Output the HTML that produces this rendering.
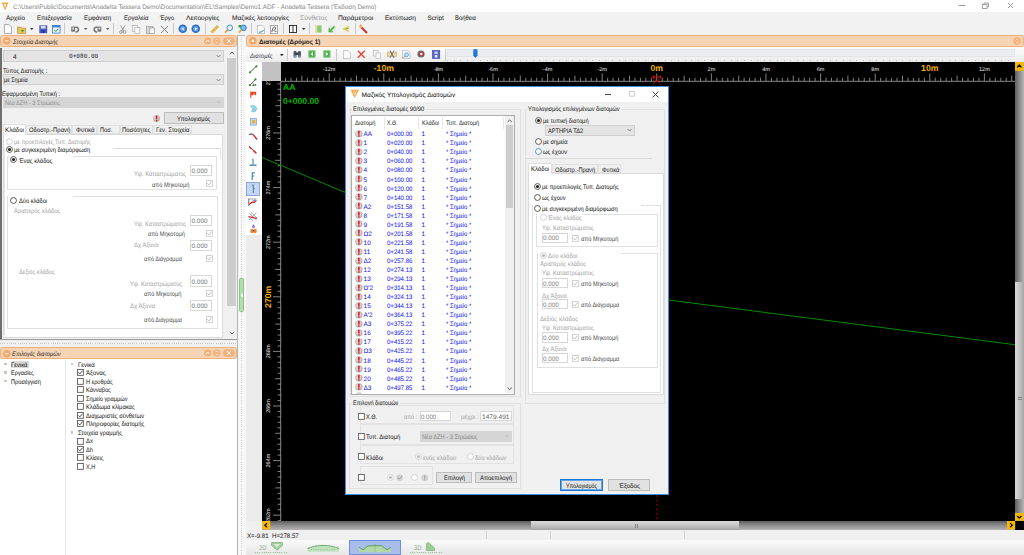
<!DOCTYPE html>
<html><head><meta charset="utf-8"><style>
html,body{margin:0;padding:0;}
body{width:1024px;height:555px;overflow:hidden;position:relative;background:#f0f0f0;font-family:"Liberation Sans",sans-serif;text-rendering:geometricPrecision;}
body>div,body>svg{position:absolute;box-sizing:border-box;}
body>svg{overflow:visible;}
.t{-webkit-text-stroke:0.04px currentColor;}
</style></head><body>
<div style="left:0.00px;top:0.00px;width:1024.00px;height:12.00px;background:#ffffff;"></div>
<svg style="left:1.00px;top:2.00px;" width="8" height="9" viewBox="0 0 8 9"><path d="M0.5 0.5 L7.5 0.5 L4 8.5 Z" fill="#f7a94f"/><path d="M2.5 2 L5.5 2 L4 5.5 Z" fill="#fff3e0"/></svg>
<div class="t" style="left:12.70px;top:5px;font-size:6.40px;line-height:6.40px;color:#8c8c8c;white-space:pre;font-family:'Liberation Sans',sans-serif;transform:scaleX(0.987);transform-origin:0 0;">C:\Users\Public\Documents\Anadelta Tessera Demo\Documentation\EL\Samples\Demo1.ADF - Anadelta Tessera (Έκδοση Demo)</div>
<div style="left:959.00px;top:5.00px;width:6.00px;height:1.00px;background:#9a9a9a;"></div>
<svg style="left:982.00px;top:2.00px;" width="8" height="7" viewBox="0 0 8 7"><rect x="0.5" y="2.5" width="4.5" height="4" fill="none" stroke="#9a9a9a" stroke-width="0.9"/><path d="M2 2.5 V1 H6.5 V5 H5" fill="none" stroke="#9a9a9a" stroke-width="0.9"/></svg>
<svg style="left:1007.00px;top:2.00px;" width="7" height="7" viewBox="0 0 7 7"><path d="M1 1 L6 6 M6 1 L1 6" stroke="#8a8a8a" stroke-width="0.9"/></svg>
<div style="left:0.00px;top:12.00px;width:1024.00px;height:23.00px;background:#f2f2f2;"></div>
<div class="t" style="left:5.90px;top:16px;font-size:6.40px;line-height:6.40px;color:#1c1c22;white-space:pre;font-family:'Liberation Sans',sans-serif;">Αρχείο</div>
<div class="t" style="left:36.80px;top:16px;font-size:6.40px;line-height:6.40px;color:#1c1c22;white-space:pre;font-family:'Liberation Sans',sans-serif;transform:scaleX(0.941);transform-origin:0 0;">Επεξεργασία</div>
<div class="t" style="left:83.70px;top:16px;font-size:6.40px;line-height:6.40px;color:#1c1c22;white-space:pre;font-family:'Liberation Sans',sans-serif;transform:scaleX(0.974);transform-origin:0 0;">Εμφάνιση</div>
<div class="t" style="left:123.50px;top:16px;font-size:6.40px;line-height:6.40px;color:#1c1c22;white-space:pre;font-family:'Liberation Sans',sans-serif;transform:scaleX(0.943);transform-origin:0 0;">Εργαλεία</div>
<div class="t" style="left:160.00px;top:16px;font-size:6.40px;line-height:6.40px;color:#1c1c22;white-space:pre;font-family:'Liberation Sans',sans-serif;transform:scaleX(0.908);transform-origin:0 0;">Έργο</div>
<div class="t" style="left:186.30px;top:16px;font-size:6.40px;line-height:6.40px;color:#1c1c22;white-space:pre;font-family:'Liberation Sans',sans-serif;transform:scaleX(1.039);transform-origin:0 0;">Λειτουργίες</div>
<div class="t" style="left:231.70px;top:16px;font-size:6.40px;line-height:6.40px;color:#1c1c22;white-space:pre;font-family:'Liberation Sans',sans-serif;transform:scaleX(1.037);transform-origin:0 0;">Μαζικές λειτουργίες</div>
<div class="t" style="left:299.70px;top:16px;font-size:6.40px;line-height:6.40px;color:#a0a0a0;white-space:pre;font-family:'Liberation Sans',sans-serif;transform:scaleX(1.056);transform-origin:0 0;">Σύνθετος</div>
<div class="t" style="left:338.30px;top:16px;font-size:6.40px;line-height:6.40px;color:#1c1c22;white-space:pre;font-family:'Liberation Sans',sans-serif;transform:scaleX(1.055);transform-origin:0 0;">Παράμετροι</div>
<div class="t" style="left:384.80px;top:16px;font-size:6.40px;line-height:6.40px;color:#1c1c22;white-space:pre;font-family:'Liberation Sans',sans-serif;transform:scaleX(1.019);transform-origin:0 0;">Εκτύπωση</div>
<div class="t" style="left:427.40px;top:16px;font-size:6.40px;line-height:6.40px;color:#1c1c22;white-space:pre;font-family:'Liberation Sans',sans-serif;">Script</div>
<div class="t" style="left:455.00px;top:16px;font-size:6.40px;line-height:6.40px;color:#1c1c22;white-space:pre;font-family:'Liberation Sans',sans-serif;transform:scaleX(0.916);transform-origin:0 0;">Βοήθεια</div>
<svg style="left:4.00px;top:24.00px;" width="8" height="10" viewBox="0 0 8 10"><path d="M0.5 0.5 H5 L7.5 3 V9.5 H0.5 Z" fill="#fff" stroke="#9a9a9a" stroke-width="0.8"/></svg>
<svg style="left:16.50px;top:24.50px;" width="9" height="9" viewBox="0 0 9 9"><path d="M0.5 2 H3.5 L4.5 3 H8.5 V8.5 H0.5 Z" fill="#e6c35a" stroke="#b08a2a" stroke-width="0.6"/><path d="M4 5 L7 5 L5.5 7.5 Z" fill="#3a9a3a"/></svg>
<svg style="left:30.00px;top:28.00px;" width="3.5" height="2.5" viewBox="0 0 3.5 2.5"><path d="M0 0 H3.5 L1.75 2 Z" fill="#333"/></svg>
<svg style="left:38.70px;top:24.50px;" width="8.5" height="8.5" viewBox="0 0 8.5 8.5"><rect x="0.3" y="0.3" width="7.9" height="7.9" fill="#4a5ac8"/><rect x="1.8" y="0.8" width="4.8" height="2.8" fill="#d9dcf2"/><rect x="2.3" y="5" width="3.8" height="3" fill="#2a3aa0"/></svg>
<svg style="left:52.00px;top:24.50px;" width="8.5" height="8.5" viewBox="0 0 8.5 8.5"><rect x="0.4" y="0.4" width="7.7" height="7.7" fill="#e8f0fb" stroke="#3d7fd0" stroke-width="0.8"/><rect x="0.4" y="0.4" width="7.7" height="2" fill="#3d7fd0"/><path d="M2.3 5 L3.8 6.5 L6.3 3.8" stroke="#2a9a2a" stroke-width="1" fill="none"/></svg>
<div style="left:64.40px;top:23.00px;width:0.80px;height:11.00px;background:#c8c8c8;"></div>
<svg style="left:70.80px;top:25.50px;" width="8.6" height="6.5" viewBox="0 0 8.6 6.5"><rect x="0.3" y="0.6" width="3.8" height="5" fill="#6e6e6e"/><rect x="1.2" y="1.5" width="2" height="2" fill="#dcdcdc"/><path d="M4 1.4 A2.4 2.4 0 1 1 4.6 5.9" stroke="#6e6e6e" stroke-width="1.5" fill="none"/></svg>
<svg style="left:84.00px;top:28.00px;" width="3.5" height="2.5" viewBox="0 0 3.5 2.5"><path d="M0 0 H3.5 L1.75 2 Z" fill="#555"/></svg>
<svg style="left:93.00px;top:25.50px;" width="8.6" height="6.5" viewBox="0 0 8.6 6.5"><rect x="4.5" y="0.6" width="3.8" height="5" fill="#6e6e6e"/><rect x="5.4" y="1.5" width="2" height="2" fill="#dcdcdc"/><path d="M4.6 1.4 A2.4 2.4 0 1 0 4 5.9" stroke="#6e6e6e" stroke-width="1.5" fill="none"/></svg>
<svg style="left:105.50px;top:28.00px;" width="3.5" height="2.5" viewBox="0 0 3.5 2.5"><path d="M0 0 H3.5 L1.75 2 Z" fill="#555"/></svg>
<div style="left:112.50px;top:23.00px;width:0.80px;height:11.00px;background:#c8c8c8;"></div>
<svg style="left:119.00px;top:24.50px;" width="7.5" height="9" viewBox="0 0 7.5 9"><path d="M1.5 0.5 L5 6 M6 0.5 L2.5 6" stroke="#8a8a8a" stroke-width="0.9"/><circle cx="2" cy="7" r="1.4" fill="none" stroke="#8a8a8a" stroke-width="0.8"/><circle cx="5.5" cy="7" r="1.4" fill="none" stroke="#8a8a8a" stroke-width="0.8"/></svg>
<svg style="left:132.40px;top:24.50px;" width="8.5" height="9" viewBox="0 0 8.5 9"><rect x="0.5" y="0.5" width="5" height="6" fill="#fafafa" stroke="#b0b0b0" stroke-width="0.7"/><rect x="2.8" y="2.5" width="5" height="6" fill="#fafafa" stroke="#b0b0b0" stroke-width="0.7"/></svg>
<svg style="left:145.80px;top:24.50px;" width="9" height="9" viewBox="0 0 9 9"><rect x="0.5" y="1.5" width="6.5" height="7" fill="#d8d8d8" stroke="#9a9a9a" stroke-width="0.7"/><rect x="3.5" y="3" width="5" height="5.5" fill="#f6f6f6" stroke="#9a9a9a" stroke-width="0.7"/></svg>
<svg style="left:159.80px;top:24.50px;" width="9" height="9" viewBox="0 0 9 9"><path d="M1 1 L8 8 M8 1 L1 8" stroke="#7a7a7a" stroke-width="1"/></svg>
<div style="left:173.00px;top:23.00px;width:0.80px;height:11.00px;background:#c8c8c8;"></div>
<svg style="left:178.00px;top:24.30px;" width="9.5" height="9.5" viewBox="0 0 9.5 9.5"><circle cx="4.75" cy="4.75" r="4.3" fill="#2f6fc4"/><circle cx="4.75" cy="4.75" r="2.6" fill="#6aa8ea"/><path d="M3.3 4.75 L5.5 3.2 V6.3 Z" fill="#fff"/></svg>
<svg style="left:191.00px;top:24.30px;" width="9.5" height="9.5" viewBox="0 0 9.5 9.5"><circle cx="4.75" cy="4.75" r="4.3" fill="#2f6fc4"/><circle cx="4.75" cy="4.75" r="2.6" fill="#6aa8ea"/><path d="M6.2 4.75 L4 3.2 V6.3 Z" fill="#fff"/></svg>
<div style="left:205.00px;top:23.00px;width:0.80px;height:11.00px;background:#c8c8c8;"></div>
<svg style="left:209.70px;top:24.30px;" width="9.5" height="9.5" viewBox="0 0 9.5 9.5"><path d="M1 7.5 L7 1.5 L8.5 3 L2.5 9 Z" fill="#f0c040" stroke="#c09020" stroke-width="0.6"/></svg>
<svg style="left:223.80px;top:24.30px;" width="9.5" height="9.5" viewBox="0 0 9.5 9.5"><circle cx="5.8" cy="3.8" r="2.8" fill="#dff0ff" stroke="#3a80c8" stroke-width="0.9"/><path d="M1 8.5 L3.8 5.7" stroke="#e09030" stroke-width="1.6"/></svg>
<svg style="left:237.60px;top:24.30px;" width="9" height="9.5" viewBox="0 0 9 9.5"><circle cx="5.5" cy="3.8" r="2.8" fill="#7ac0f0" stroke="#2a70b8" stroke-width="0.9"/><path d="M1 8.5 L3.5 5.8" stroke="#e0a020" stroke-width="1.6"/><rect x="0.5" y="1" width="2.5" height="2.5" fill="#3aa03a"/></svg>
<div style="left:250.50px;top:23.00px;width:0.80px;height:11.00px;background:#c8c8c8;"></div>
<svg style="left:257.00px;top:24.50px;" width="8" height="9" viewBox="0 0 8 9"><path d="M0.5 0.5 H5 L7.5 3 V8.5 H0.5 Z" fill="#fff" stroke="#a8a8a8" stroke-width="0.7"/><path d="M2 7 C3.5 7.5 5.5 6.5 6.5 5" stroke="#4a90d8" stroke-width="1.3" fill="none"/></svg>
<svg style="left:269.70px;top:24.50px;" width="8" height="9" viewBox="0 0 8 9"><rect x="0.5" y="0.5" width="7" height="8" fill="#fafafa" stroke="#8a8a8a" stroke-width="0.7"/><path d="M1.8 7.2 C2.5 4 3 2 4.5 2 C6 2 6 4 4.5 5 C3.5 5.5 5 6.5 6.5 6.5" stroke="#333" stroke-width="0.8" fill="none"/></svg>
<div style="left:282.80px;top:23.00px;width:0.80px;height:11.00px;background:#c8c8c8;"></div>
<svg style="left:288.70px;top:25.00px;" width="8" height="8" viewBox="0 0 8 8"><rect x="0.5" y="0.5" width="7" height="7" fill="#fff" stroke="#222" stroke-width="0.9"/><path d="M4 0.5 V7.5" stroke="#222" stroke-width="0.9"/></svg>
<svg style="left:301.50px;top:28.00px;" width="3.5" height="2.5" viewBox="0 0 3.5 2.5"><path d="M0 0 H3.5 L1.75 2 Z" fill="#333"/></svg>
<div style="left:308.60px;top:23.00px;width:0.80px;height:11.00px;background:#c8c8c8;"></div>
<svg style="left:315.00px;top:25.00px;" width="7" height="8" viewBox="0 0 7 8"><rect x="0" y="0" width="7" height="8" fill="#e6eedc"/><rect x="2.2" y="0.5" width="4.3" height="7" fill="#86cc78"/><rect x="0.5" y="0.5" width="1.5" height="7" fill="#f2d27a"/></svg>
<svg style="left:328.30px;top:25.00px;" width="8" height="8" viewBox="0 0 8 8"><rect x="0.3" y="0.3" width="7.4" height="7.4" fill="#e4eedc"/><path d="M6.5 1.5 L2 6" stroke="#3aa83a" stroke-width="1.6" fill="none"/><path d="M1.2 3 V6.8 H5" stroke="#3aa83a" stroke-width="1.1" fill="none"/></svg>
<svg style="left:341.90px;top:25.00px;" width="8" height="8" viewBox="0 0 8 8"><rect x="0.3" y="0.3" width="7.4" height="7.4" fill="#f4f0dc"/><path d="M6.8 1.5 L1.8 4 L6.8 6.5" stroke="#e8c040" stroke-width="1.1" fill="none"/><path d="M6.8 3 L3.5 4.2" stroke="#4aaa3a" stroke-width="0.9"/></svg>
<div style="left:355.20px;top:23.00px;width:0.80px;height:11.00px;background:#c8c8c8;"></div>
<svg style="left:359.40px;top:24.30px;" width="9" height="9.5" viewBox="0 0 9 9.5"><path d="M1 2 L8 9" stroke="#d03030" stroke-width="2"/><path d="M1 0.5 L3 2.5" stroke="#f0b030" stroke-width="1.2"/><circle cx="2" cy="3" r="1" fill="#f6d050"/></svg>
<div style="left:0px;top:34.7px;width:237px;height:12.799999999999997px;background:#f4d4b5;border:1px solid #f3b078;border-radius:3px;"></div>
<svg style="left:2.80px;top:37.30px;" width="7.6" height="7.6" viewBox="0 0 7.6 7.6"><circle cx="3.8" cy="3.8" r="3.5" fill="#f2aa6a" stroke="#e8985a" stroke-width="0.5"/><rect x="2" y="3.4" width="3.6" height="0.9" fill="#fff"/></svg>
<div class="t" style="left:12.90px;top:40px;font-size:6.40px;line-height:6.40px;color:#2a2a2a;white-space:pre;font-family:'Liberation Sans',sans-serif;font-style:italic;transform:scaleX(0.916);transform-origin:0 0;-webkit-text-stroke:0;">Στοιχεία Διατομής</div>
<svg style="left:203.50px;top:37.20px;" width="7.5" height="8" viewBox="0 0 7.5 8"><circle cx="3.75" cy="4" r="3.6" fill="#f2b07a"/><path d="M2 5 L3.75 3 L5.5 5" stroke="#fff" stroke-width="0.9" fill="none"/></svg>
<svg style="left:213.20px;top:37.20px;" width="7.5" height="8" viewBox="0 0 7.5 8"><circle cx="3.75" cy="4" r="3.6" fill="#f2b07a"/><path d="M2.6 3.2 L3.75 2 L4.9 3.2 M2.6 4.8 L3.75 6 L4.9 4.8" stroke="#fff" stroke-width="0.7" fill="none"/></svg>
<svg style="left:222.60px;top:37.20px;" width="11.8" height="8" viewBox="0 0 11.8 8"><rect x="0" y="0.2" width="11.8" height="7.6" rx="3.8" fill="#f2b07a"/><path d="M4 2 L7.8 6 M7.8 2 L4 6" stroke="#fff" stroke-width="1"/></svg>
<div style="left:0.00px;top:47.50px;width:237.00px;height:291.50px;background:#f0f0f0;"></div>
<div style="left:0.00px;top:47.50px;width:1.60px;height:291.50px;background:#6e6e6e;"></div>
<div style="left:236.60px;top:35.00px;width:1.00px;height:520.00px;background:#b4b4b4;"></div>
<div style="left:2.90px;top:49.90px;width:220.80px;height:11.80px;background:#e4e4e4;border:1px solid #cfcfcf;"></div>
<svg style="left:215.70px;top:53.80px;" width="5" height="4" viewBox="0 0 5 4"><path d="M0.6 1 L2.5 3 L4.4 1" stroke="#6a6a6a" stroke-width="0.8" fill="none"/></svg>
<div class="t" style="left:12.90px;top:55px;font-size:6.40px;line-height:6.40px;color:#1c1c22;white-space:pre;font-family:'Liberation Sans',sans-serif;">4</div>
<div class="t" style="left:68.60px;top:54px;font-size:6.40px;line-height:6.40px;color:#303040;white-space:pre;font-family:'Liberation Mono',monospace;transform:scaleX(0.954);transform-origin:0 0;">0+080.00</div>
<div class="t" style="left:2.60px;top:69px;font-size:6.40px;line-height:6.40px;color:#1c1c22;white-space:pre;font-family:'Liberation Sans',sans-serif;transform:scaleX(0.915);transform-origin:0 0;">Τύπος Διατομής :</div>
<div style="left:2.90px;top:74.30px;width:220.80px;height:10.80px;background:#e4e4e4;border:1px solid #cfcfcf;"></div>
<svg style="left:215.70px;top:77.70px;" width="5" height="4" viewBox="0 0 5 4"><path d="M0.6 1 L2.5 3 L4.4 1" stroke="#6a6a6a" stroke-width="0.8" fill="none"/></svg>
<div class="t" style="left:4.10px;top:78px;font-size:6.40px;line-height:6.40px;color:#1c1c22;white-space:pre;font-family:'Liberation Sans',sans-serif;transform:scaleX(0.862);transform-origin:0 0;">με Σημεία</div>
<div class="t" style="left:2.30px;top:92px;font-size:6.40px;line-height:6.40px;color:#1c1c22;white-space:pre;font-family:'Liberation Sans',sans-serif;transform:scaleX(0.895);transform-origin:0 0;">Εφαρμοσμένη Τυπική :</div>
<div style="left:2.90px;top:96.70px;width:220.80px;height:11.20px;background:#d5d5d5;border:1px solid #d5d5d5;"></div>
<svg style="left:215.70px;top:100.30px;" width="5" height="4" viewBox="0 0 5 4"><path d="M0.6 1 L2.5 3 L4.4 1" stroke="#b8b8b8" stroke-width="0.8" fill="none"/></svg>
<div class="t" style="left:4.70px;top:101px;font-size:6.40px;line-height:6.40px;color:#949494;white-space:pre;font-family:'Liberation Sans',sans-serif;transform:scaleX(0.881);transform-origin:0 0;">Νέα ΔΖΗ - 3 Στρώσεις</div>
<svg style="left:152.80px;top:114.80px;" width="7.2" height="7.2" viewBox="0 0 7.2 7.2"><circle cx="3.6" cy="3.6" r="3.45" fill="#b2b2b2"/><circle cx="3.30" cy="3.30" r="2.50" fill="#d4d4d4"/><rect x="2.80" y="0.70" width="1.6" height="3.7" fill="#e8181a"/><rect x="2.80" y="5.00" width="1.6" height="1.3" fill="#e8181a"/></svg>
<div style="left:164.00px;top:112.20px;width:59.70px;height:12.10px;background:#e1e1e1;border:1px solid #bdbdbd;"></div>
<div class="t" style="left:176.90px;top:117px;font-size:6.40px;line-height:6.40px;color:#1c1c22;white-space:pre;font-family:'Liberation Sans',sans-serif;transform:scaleX(0.888);transform-origin:0 0;">Υπολογισμός</div>
<div style="left:2.60px;top:134.20px;width:220.60px;height:203.40px;background:#ffffff;border:1px solid #dadada;"></div>
<div style="left:2.60px;top:124.10px;width:23.80px;height:11.10px;background:#ffffff;border:1px solid #e0e0e0;border-bottom:none;"></div>
<div class="t" style="left:5.00px;top:128px;font-size:6.40px;line-height:6.40px;color:#1c1c22;white-space:pre;font-family:'Liberation Sans',sans-serif;transform:scaleX(0.969);transform-origin:0 0;">Κλάδοι</div>
<div style="left:26.40px;top:124.90px;width:45.70px;height:9.30px;background:#f0f0f0;border:1px solid #e0e0e0;"></div>
<div class="t" style="left:29.00px;top:128px;font-size:6.40px;line-height:6.40px;color:#1c1c22;white-space:pre;font-family:'Liberation Sans',sans-serif;transform:scaleX(0.921);transform-origin:0 0;">Οδοστρ.-Πρανή</div>
<div style="left:72.10px;top:124.90px;width:24.60px;height:9.30px;background:#f0f0f0;border:1px solid #e0e0e0;"></div>
<div class="t" style="left:75.50px;top:128px;font-size:6.40px;line-height:6.40px;color:#1c1c22;white-space:pre;font-family:'Liberation Sans',sans-serif;transform:scaleX(0.965);transform-origin:0 0;">Φυτικά</div>
<div style="left:96.70px;top:124.90px;width:23.30px;height:9.30px;background:#f0f0f0;border:1px solid #e0e0e0;"></div>
<div class="t" style="left:99.60px;top:128px;font-size:6.40px;line-height:6.40px;color:#1c1c22;white-space:pre;font-family:'Liberation Sans',sans-serif;transform:scaleX(0.892);transform-origin:0 0;">Ποσ.</div>
<div style="left:120.00px;top:124.90px;width:32.60px;height:9.30px;background:#f0f0f0;border:1px solid #e0e0e0;"></div>
<div class="t" style="left:121.80px;top:128px;font-size:6.40px;line-height:6.40px;color:#1c1c22;white-space:pre;font-family:'Liberation Sans',sans-serif;transform:scaleX(0.942);transform-origin:0 0;">Ποσότητες</div>
<div style="left:152.60px;top:124.90px;width:39.10px;height:9.30px;background:#f0f0f0;border:1px solid #e0e0e0;"></div>
<div class="t" style="left:155.50px;top:128px;font-size:6.40px;line-height:6.40px;color:#1c1c22;white-space:pre;font-family:'Liberation Sans',sans-serif;transform:scaleX(0.943);transform-origin:0 0;">Γεν. Στοιχεία</div>
<svg style="left:5.60px;top:137.60px;" width="7" height="7" viewBox="0 0 7 7"><circle cx="3.5" cy="3.5" r="2.95" fill="#fff" stroke="#c6c6c6" stroke-width="0.8"/></svg>
<div class="t" style="left:14.00px;top:140px;font-size:6.40px;line-height:6.40px;color:#a8a8a8;white-space:pre;font-family:'Liberation Sans',sans-serif;transform:scaleX(0.891);transform-origin:0 0;">με προεπιλογές Τυπ. Διατομής</div>
<div style="left:113.00px;top:147.60px;width:108.40px;height:1.00px;background:#dcdcdc;"></div>
<div style="left:220.40px;top:147.60px;width:1.00px;height:12.40px;background:#e6e6e6;"></div>
<div style="left:4.20px;top:147.60px;width:1.00px;height:187.90px;background:#e6e6e6;"></div>
<svg style="left:5.60px;top:145.80px;" width="7" height="7" viewBox="0 0 7 7"><circle cx="3.5" cy="3.5" r="2.95" fill="#fff" stroke="#333333" stroke-width="0.8"/><circle cx="3.5" cy="3.5" r="1.6" fill="#222"/></svg>
<div class="t" style="left:14.00px;top:148px;font-size:6.40px;line-height:6.40px;color:#1c1c22;white-space:pre;font-family:'Liberation Sans',sans-serif;transform:scaleX(0.902);transform-origin:0 0;">με συγκεκριμένη διαμόρφωση</div>
<div style="left:7.30px;top:155.80px;width:1.00px;height:33.70px;background:#e0e0e0;"></div>
<div style="left:216.30px;top:155.80px;width:1.00px;height:33.70px;background:#e0e0e0;"></div>
<div style="left:7.30px;top:188.50px;width:210.00px;height:1.00px;background:#e0e0e0;"></div>
<div style="left:7.30px;top:155.80px;width:0.00px;height:1.00px;background:#e0e0e0;"></div>
<div style="left:73.00px;top:155.80px;width:144.30px;height:1.00px;background:#e0e0e0;"></div>
<svg style="left:10.25px;top:156.40px;" width="7" height="7" viewBox="0 0 7 7"><circle cx="3.5" cy="3.5" r="2.95" fill="#fff" stroke="#333333" stroke-width="0.8"/><circle cx="3.5" cy="3.5" r="1.6" fill="#222"/></svg>
<div class="t" style="left:18.80px;top:159px;font-size:6.40px;line-height:6.40px;color:#1c1c22;white-space:pre;font-family:'Liberation Sans',sans-serif;transform:scaleX(0.903);transform-origin:0 0;">Ένας κλάδος</div>
<div class="t" style="left:134.00px;top:172px;font-size:6.40px;line-height:6.40px;color:#a8a8a8;white-space:pre;font-family:'Liberation Sans',sans-serif;transform:scaleX(0.900);transform-origin:0 0;">Υψ. Καταστρώματος</div>
<div style="left:190.00px;top:165.20px;width:22.00px;height:11.10px;background:#ffffff;border:1px solid #d6d6d6;"></div>
<div class="t" style="left:191.50px;top:169px;font-size:6.40px;line-height:6.40px;color:#7a7a7a;white-space:pre;font-family:'Liberation Sans',sans-serif;">0.000</div>
<div class="t" style="left:151.70px;top:183px;font-size:6.40px;line-height:6.40px;color:#555555;white-space:pre;font-family:'Liberation Sans',sans-serif;transform:scaleX(0.889);transform-origin:0 0;">από Μηκοτομή</div>
<svg style="left:206.20px;top:180.00px;" width="8.3" height="8.3" viewBox="0 0 8.3 8.3"><rect x="0.45" y="0.45" width="5.90" height="5.90" fill="#fff" stroke="#cdcdcd" stroke-width="0.9"/><path d="M1.36 3.4 L2.856 4.896 L5.576 1.7" stroke="#b8b8b8" stroke-width="0.9" fill="none"/></svg>
<div style="left:7.30px;top:196.10px;width:1.00px;height:132.90px;background:#e0e0e0;"></div>
<div style="left:216.90px;top:196.10px;width:1.00px;height:132.90px;background:#e0e0e0;"></div>
<div style="left:7.30px;top:328.00px;width:210.60px;height:1.00px;background:#e0e0e0;"></div>
<div style="left:7.30px;top:196.10px;width:0.00px;height:1.00px;background:#e0e0e0;"></div>
<div style="left:73.00px;top:196.10px;width:144.90px;height:1.00px;background:#e0e0e0;"></div>
<svg style="left:10.00px;top:196.70px;" width="7" height="7" viewBox="0 0 7 7"><circle cx="3.5" cy="3.5" r="2.95" fill="#fff" stroke="#333333" stroke-width="0.8"/></svg>
<div class="t" style="left:18.80px;top:199px;font-size:6.40px;line-height:6.40px;color:#1c1c22;white-space:pre;font-family:'Liberation Sans',sans-serif;transform:scaleX(0.888);transform-origin:0 0;">Δύο κλάδοι</div>
<div class="t" style="left:14.00px;top:209px;font-size:6.40px;line-height:6.40px;color:#a8a8a8;white-space:pre;font-family:'Liberation Sans',sans-serif;transform:scaleX(0.911);transform-origin:0 0;">Αριστερός κλάδος</div>
<div class="t" style="left:134.00px;top:222px;font-size:6.40px;line-height:6.40px;color:#a8a8a8;white-space:pre;font-family:'Liberation Sans',sans-serif;transform:scaleX(0.897);transform-origin:0 0;">Υψ. Καταστρώματος</div>
<div style="left:190.00px;top:215.20px;width:22.00px;height:11.10px;background:#ffffff;border:1px solid #d6d6d6;"></div>
<div class="t" style="left:191.50px;top:219px;font-size:6.40px;line-height:6.40px;color:#7a7a7a;white-space:pre;font-family:'Liberation Sans',sans-serif;">0.000</div>
<div class="t" style="left:148.00px;top:232px;font-size:6.40px;line-height:6.40px;color:#555555;white-space:pre;font-family:'Liberation Sans',sans-serif;transform:scaleX(0.877);transform-origin:0 0;">από Μηκοτομή</div>
<svg style="left:206.20px;top:230.00px;" width="8.3" height="8.3" viewBox="0 0 8.3 8.3"><rect x="0.45" y="0.45" width="5.90" height="5.90" fill="#fff" stroke="#cdcdcd" stroke-width="0.9"/><path d="M1.36 3.4 L2.856 4.896 L5.576 1.7" stroke="#b8b8b8" stroke-width="0.9" fill="none"/></svg>
<div class="t" style="left:134.00px;top:243px;font-size:6.40px;line-height:6.40px;color:#a8a8a8;white-space:pre;font-family:'Liberation Sans',sans-serif;transform:scaleX(0.933);transform-origin:0 0;">Δχ Άξονα</div>
<div style="left:190.00px;top:240.00px;width:22.00px;height:11.10px;background:#ffffff;border:1px solid #d6d6d6;"></div>
<div class="t" style="left:191.50px;top:244px;font-size:6.40px;line-height:6.40px;color:#7a7a7a;white-space:pre;font-family:'Liberation Sans',sans-serif;">0.000</div>
<div class="t" style="left:144.00px;top:257px;font-size:6.40px;line-height:6.40px;color:#555555;white-space:pre;font-family:'Liberation Sans',sans-serif;transform:scaleX(0.859);transform-origin:0 0;">από Διάγραμμα</div>
<svg style="left:206.20px;top:255.00px;" width="8.3" height="8.3" viewBox="0 0 8.3 8.3"><rect x="0.45" y="0.45" width="5.90" height="5.90" fill="#fff" stroke="#cdcdcd" stroke-width="0.9"/><path d="M1.36 3.4 L2.856 4.896 L5.576 1.7" stroke="#b8b8b8" stroke-width="0.9" fill="none"/></svg>
<div class="t" style="left:18.90px;top:270px;font-size:6.40px;line-height:6.40px;color:#a8a8a8;white-space:pre;font-family:'Liberation Sans',sans-serif;transform:scaleX(0.901);transform-origin:0 0;">Δεξιός κλάδος</div>
<div class="t" style="left:130.00px;top:282px;font-size:6.40px;line-height:6.40px;color:#a8a8a8;white-space:pre;font-family:'Liberation Sans',sans-serif;transform:scaleX(0.897);transform-origin:0 0;">Υψ. Καταστρώματος</div>
<div style="left:190.00px;top:275.20px;width:22.00px;height:11.50px;background:#ffffff;border:1px solid #d6d6d6;"></div>
<div class="t" style="left:191.50px;top:280px;font-size:6.40px;line-height:6.40px;color:#7a7a7a;white-space:pre;font-family:'Liberation Sans',sans-serif;">0.000</div>
<div class="t" style="left:144.00px;top:292px;font-size:6.40px;line-height:6.40px;color:#555555;white-space:pre;font-family:'Liberation Sans',sans-serif;transform:scaleX(0.889);transform-origin:0 0;">από Μηκοτομή</div>
<svg style="left:206.20px;top:290.40px;" width="8.3" height="8.3" viewBox="0 0 8.3 8.3"><rect x="0.45" y="0.45" width="5.90" height="5.90" fill="#fff" stroke="#cdcdcd" stroke-width="0.9"/><path d="M1.36 3.4 L2.856 4.896 L5.576 1.7" stroke="#b8b8b8" stroke-width="0.9" fill="none"/></svg>
<div class="t" style="left:130.00px;top:304px;font-size:6.40px;line-height:6.40px;color:#a8a8a8;white-space:pre;font-family:'Liberation Sans',sans-serif;transform:scaleX(0.944);transform-origin:0 0;">Δχ Άξονα</div>
<div style="left:190.00px;top:300.30px;width:22.00px;height:11.10px;background:#ffffff;border:1px solid #d6d6d6;"></div>
<div class="t" style="left:191.50px;top:304px;font-size:6.40px;line-height:6.40px;color:#7a7a7a;white-space:pre;font-family:'Liberation Sans',sans-serif;">0.000</div>
<div class="t" style="left:144.00px;top:318px;font-size:6.40px;line-height:6.40px;color:#555555;white-space:pre;font-family:'Liberation Sans',sans-serif;transform:scaleX(0.861);transform-origin:0 0;">από Διάγραμμα</div>
<svg style="left:206.20px;top:315.50px;" width="8.3" height="8.3" viewBox="0 0 8.3 8.3"><rect x="0.45" y="0.45" width="5.90" height="5.90" fill="#fff" stroke="#cdcdcd" stroke-width="0.9"/><path d="M1.36 3.4 L2.856 4.896 L5.576 1.7" stroke="#b8b8b8" stroke-width="0.9" fill="none"/></svg>
<div style="left:226.50px;top:48.00px;width:10.10px;height:290.50px;background:#f0f0f0;"></div>
<div style="left:227.40px;top:58.00px;width:8.80px;height:247.50px;background:#cdcdcd;"></div>
<svg style="left:228.50px;top:51.00px;" width="6" height="4" viewBox="0 0 6 4"><path d="M0.8 3 L3 1 L5.2 3" stroke="#505050" stroke-width="0.9" fill="none"/></svg>
<svg style="left:228.50px;top:330.50px;" width="6" height="4" viewBox="0 0 6 4"><path d="M0.8 1 L3 3 L5.2 1" stroke="#505050" stroke-width="0.9" fill="none"/></svg>
<div style="left:0.00px;top:338.50px;width:237.00px;height:1.30px;background:#9a9a9a;"></div>
<div style="left:0px;top:342.5px;width:236px;height:1px;background:repeating-linear-gradient(90deg,#c4c4c4 0 1px,transparent 1px 2.2px);"></div>
<div style="left:0px;top:347.2px;width:237px;height:12.199999999999989px;background:#f4d4b5;border:1px solid #f3b078;border-radius:3px;"></div>
<svg style="left:2.80px;top:349.50px;" width="7.6" height="7.6" viewBox="0 0 7.6 7.6"><circle cx="3.8" cy="3.8" r="3.5" fill="#f2aa6a" stroke="#e8985a" stroke-width="0.5"/><rect x="2" y="3.4" width="3.6" height="0.9" fill="#fff"/></svg>
<div class="t" style="left:12.30px;top:352px;font-size:6.40px;line-height:6.40px;color:#2a2a2a;white-space:pre;font-family:'Liberation Sans',sans-serif;font-style:italic;transform:scaleX(0.912);transform-origin:0 0;-webkit-text-stroke:0;">Επιλογές διατομών</div>
<svg style="left:203.50px;top:349.40px;" width="7.5" height="8" viewBox="0 0 7.5 8"><circle cx="3.75" cy="4" r="3.6" fill="#f2b07a"/><path d="M2 5 L3.75 3 L5.5 5" stroke="#fff" stroke-width="0.9" fill="none"/></svg>
<svg style="left:213.20px;top:349.40px;" width="7.5" height="8" viewBox="0 0 7.5 8"><circle cx="3.75" cy="4" r="3.6" fill="#f2b07a"/><path d="M2.6 3.2 L3.75 2 L4.9 3.2 M2.6 4.8 L3.75 6 L4.9 4.8" stroke="#fff" stroke-width="0.7" fill="none"/></svg>
<svg style="left:222.60px;top:349.40px;" width="11.8" height="8" viewBox="0 0 11.8 8"><rect x="0" y="0.2" width="11.8" height="7.6" rx="3.8" fill="#f2b07a"/><path d="M4 2 L7.8 6 M7.8 2 L4 6" stroke="#fff" stroke-width="1"/></svg>
<div style="left:0.00px;top:359.40px;width:236.60px;height:195.60px;background:#ffffff;"></div>
<div style="left:65.00px;top:359.40px;width:1.00px;height:195.60px;background:#e6e6e6;"></div>
<div style="left:10.50px;top:360.50px;width:18.80px;height:7.60px;background:#dadada;"></div>
<div style="left:4.30px;top:363.00px;width:2.40px;height:2.40px;background:#c8c8c8;"></div>
<div class="t" style="left:11.10px;top:363px;font-size:6.40px;line-height:6.40px;color:#1c1c22;white-space:pre;font-family:'Liberation Sans',sans-serif;transform:scaleX(0.926);transform-origin:0 0;">Γενικά</div>
<div style="left:4.30px;top:371.40px;width:2.40px;height:2.40px;background:#c8c8c8;"></div>
<div class="t" style="left:11.10px;top:371px;font-size:6.40px;line-height:6.40px;color:#1c1c22;white-space:pre;font-family:'Liberation Sans',sans-serif;transform:scaleX(0.873);transform-origin:0 0;">Εργασίες</div>
<div style="left:4.30px;top:379.90px;width:2.40px;height:2.40px;background:#c8c8c8;"></div>
<div class="t" style="left:11.10px;top:380px;font-size:6.40px;line-height:6.40px;color:#1c1c22;white-space:pre;font-family:'Liberation Sans',sans-serif;transform:scaleX(0.883);transform-origin:0 0;">Προσέγγιση</div>
<div style="left:70.90px;top:363.00px;width:2.40px;height:2.40px;background:#c8c8c8;"></div>
<div class="t" style="left:77.80px;top:363px;font-size:6.40px;line-height:6.40px;color:#1c1c22;white-space:pre;font-family:'Liberation Sans',sans-serif;transform:scaleX(0.943);transform-origin:0 0;">Γενικά</div>
<svg style="left:77.40px;top:369.10px;" width="8.3" height="8.3" viewBox="0 0 8.3 8.3"><rect x="0.45" y="0.45" width="5.90" height="5.90" fill="#fff" stroke="#5c5c5c" stroke-width="0.9"/><path d="M1.36 3.4 L2.856 4.896 L5.576 1.7" stroke="#333" stroke-width="0.9" fill="none"/></svg>
<div class="t" style="left:86.20px;top:371px;font-size:6.40px;line-height:6.40px;color:#1c1c22;white-space:pre;font-family:'Liberation Sans',sans-serif;transform:scaleX(0.965);transform-origin:0 0;">Άξονας</div>
<svg style="left:77.40px;top:377.60px;" width="8.3" height="8.3" viewBox="0 0 8.3 8.3"><rect x="0.45" y="0.45" width="5.90" height="5.90" fill="#fff" stroke="#5c5c5c" stroke-width="0.9"/></svg>
<div class="t" style="left:86.20px;top:380px;font-size:6.40px;line-height:6.40px;color:#1c1c22;white-space:pre;font-family:'Liberation Sans',sans-serif;transform:scaleX(0.882);transform-origin:0 0;">Η ερυθράς</div>
<svg style="left:77.40px;top:386.30px;" width="8.3" height="8.3" viewBox="0 0 8.3 8.3"><rect x="0.45" y="0.45" width="5.90" height="5.90" fill="#fff" stroke="#5c5c5c" stroke-width="0.9"/></svg>
<div class="t" style="left:86.20px;top:388px;font-size:6.40px;line-height:6.40px;color:#1c1c22;white-space:pre;font-family:'Liberation Sans',sans-serif;transform:scaleX(0.876);transform-origin:0 0;">Κάνναβος</div>
<svg style="left:77.40px;top:394.70px;" width="8.3" height="8.3" viewBox="0 0 8.3 8.3"><rect x="0.45" y="0.45" width="5.90" height="5.90" fill="#fff" stroke="#5c5c5c" stroke-width="0.9"/></svg>
<div class="t" style="left:86.20px;top:397px;font-size:6.40px;line-height:6.40px;color:#1c1c22;white-space:pre;font-family:'Liberation Sans',sans-serif;transform:scaleX(0.886);transform-origin:0 0;">Σημείο γραμμών</div>
<svg style="left:77.40px;top:403.30px;" width="8.3" height="8.3" viewBox="0 0 8.3 8.3"><rect x="0.45" y="0.45" width="5.90" height="5.90" fill="#fff" stroke="#5c5c5c" stroke-width="0.9"/></svg>
<div class="t" style="left:86.20px;top:405px;font-size:6.40px;line-height:6.40px;color:#1c1c22;white-space:pre;font-family:'Liberation Sans',sans-serif;transform:scaleX(0.905);transform-origin:0 0;">Κλάδωμα κλίμακας</div>
<svg style="left:77.40px;top:411.80px;" width="8.3" height="8.3" viewBox="0 0 8.3 8.3"><rect x="0.45" y="0.45" width="5.90" height="5.90" fill="#fff" stroke="#5c5c5c" stroke-width="0.9"/><path d="M1.36 3.4 L2.856 4.896 L5.576 1.7" stroke="#333" stroke-width="0.9" fill="none"/></svg>
<div class="t" style="left:86.20px;top:414px;font-size:6.40px;line-height:6.40px;color:#1c1c22;white-space:pre;font-family:'Liberation Sans',sans-serif;transform:scaleX(0.903);transform-origin:0 0;">Διαχωριστές σύνθετων</div>
<svg style="left:77.40px;top:420.30px;" width="8.3" height="8.3" viewBox="0 0 8.3 8.3"><rect x="0.45" y="0.45" width="5.90" height="5.90" fill="#fff" stroke="#5c5c5c" stroke-width="0.9"/><path d="M1.36 3.4 L2.856 4.896 L5.576 1.7" stroke="#333" stroke-width="0.9" fill="none"/></svg>
<div class="t" style="left:86.20px;top:422px;font-size:6.40px;line-height:6.40px;color:#1c1c22;white-space:pre;font-family:'Liberation Sans',sans-serif;transform:scaleX(0.910);transform-origin:0 0;">Πληροφορίες διατομής</div>
<div style="left:70.90px;top:431.30px;width:2.40px;height:2.40px;background:#c8c8c8;"></div>
<div class="t" style="left:77.50px;top:431px;font-size:6.40px;line-height:6.40px;color:#1c1c22;white-space:pre;font-family:'Liberation Sans',sans-serif;transform:scaleX(0.903);transform-origin:0 0;">Στοιχεία γραμμής</div>
<svg style="left:77.40px;top:437.50px;" width="8.3" height="8.3" viewBox="0 0 8.3 8.3"><rect x="0.45" y="0.45" width="5.90" height="5.90" fill="#fff" stroke="#5c5c5c" stroke-width="0.9"/></svg>
<div class="t" style="left:86.20px;top:439px;font-size:6.40px;line-height:6.40px;color:#1c1c22;white-space:pre;font-family:'Liberation Sans',sans-serif;transform:scaleX(0.910);transform-origin:0 0;">Δx</div>
<svg style="left:77.40px;top:445.90px;" width="8.3" height="8.3" viewBox="0 0 8.3 8.3"><rect x="0.45" y="0.45" width="5.90" height="5.90" fill="#fff" stroke="#5c5c5c" stroke-width="0.9"/><path d="M1.36 3.4 L2.856 4.896 L5.576 1.7" stroke="#333" stroke-width="0.9" fill="none"/></svg>
<div class="t" style="left:86.20px;top:448px;font-size:6.40px;line-height:6.40px;color:#1c1c22;white-space:pre;font-family:'Liberation Sans',sans-serif;transform:scaleX(0.868);transform-origin:0 0;">Δh</div>
<svg style="left:77.40px;top:454.40px;" width="8.3" height="8.3" viewBox="0 0 8.3 8.3"><rect x="0.45" y="0.45" width="5.90" height="5.90" fill="#fff" stroke="#5c5c5c" stroke-width="0.9"/></svg>
<div class="t" style="left:86.20px;top:456px;font-size:6.40px;line-height:6.40px;color:#1c1c22;white-space:pre;font-family:'Liberation Sans',sans-serif;transform:scaleX(0.856);transform-origin:0 0;">Κλίσεις</div>
<svg style="left:77.40px;top:462.80px;" width="8.3" height="8.3" viewBox="0 0 8.3 8.3"><rect x="0.45" y="0.45" width="5.90" height="5.90" fill="#fff" stroke="#5c5c5c" stroke-width="0.9"/></svg>
<div class="t" style="left:86.20px;top:465px;font-size:6.40px;line-height:6.40px;color:#1c1c22;white-space:pre;font-family:'Liberation Sans',sans-serif;transform:scaleX(0.853);transform-origin:0 0;">Χ,Η</div>
<div style="left:237.60px;top:34.00px;width:8.40px;height:521.00px;background:#f7f7f7;"></div>
<div style="left:236.60px;top:35.00px;width:8.40px;height:1.00px;background:#b4b4b4;"></div>
<div style="left:241.2px;top:37px;width:1px;height:518px;background:repeating-linear-gradient(180deg,#d0d0d0 0 1px,transparent 1px 2.2px);"></div>
<div style="left:238.70px;top:278.00px;width:5.40px;height:33.90px;background:#b4dcb0;border:0.8px solid #86c683;border-radius:1.5px;"></div>
<svg style="left:239.80px;top:292.60px;" width="3.5" height="4.5" viewBox="0 0 3.5 4.5"><path d="M3 0.3 L0.5 2.25 L3 4.2 Z" fill="#fff"/></svg>
<div style="left:246px;top:34.8px;width:777.6px;height:12.5px;background:#f4d4b5;border:1px solid #f3b078;border-radius:3px;"></div>
<svg style="left:248.50px;top:37.25px;" width="7.6" height="7.6" viewBox="0 0 7.6 7.6"><circle cx="3.8" cy="3.8" r="3.5" fill="#f2aa6a" stroke="#e8985a" stroke-width="0.5"/><circle cx="3.8" cy="3.8" r="1.3" fill="#fff"/></svg>
<div class="t" style="left:258.90px;top:40px;font-size:6.40px;line-height:6.40px;color:#222;white-space:pre;font-family:'Liberation Sans',sans-serif;font-weight:bold;transform:scaleX(0.990);transform-origin:0 0;">Διατομές (Δρόμος 1)</div>
<svg style="left:1013.00px;top:37.30px;" width="8" height="8" viewBox="0 0 8 8"><circle cx="4" cy="4" r="3.7" fill="#f2b07a"/><path d="M2.9 3.3 L4 2.2 L5.1 3.3 M2.9 4.7 L4 5.8 L5.1 4.7" stroke="#fff" stroke-width="0.7" fill="none"/></svg>
<div style="left:246px;top:47.3px;width:778px;height:14.7px;background:linear-gradient(#fdfdfd,#ececec);"></div>
<div class="t" style="left:249.90px;top:54px;font-size:6.40px;line-height:6.40px;color:#3a3a4a;white-space:pre;font-family:'Liberation Sans',sans-serif;font-style:italic;transform:scaleX(0.931);transform-origin:0 0;-webkit-text-stroke:0;">Διατομές</div>
<svg style="left:280.40px;top:54.00px;" width="4" height="3" viewBox="0 0 4 3"><path d="M0 0 H3.6 L1.8 2.2 Z" fill="#222"/></svg>
<div style="left:287.30px;top:49.00px;width:0.80px;height:12.00px;background:#c9c9c9;"></div>
<svg style="left:293.00px;top:50.30px;" width="8.5" height="8" viewBox="0 0 8.5 8"><rect x="0.5" y="1" width="3" height="6.5" rx="1" fill="#505a66"/><rect x="5" y="1" width="3" height="6.5" rx="1" fill="#505a66"/><rect x="2.5" y="2.5" width="3.5" height="2.5" fill="#3a4450"/><rect x="1" y="5.5" width="2" height="2" fill="#8aa0b8"/><rect x="5.5" y="5.5" width="2" height="2" fill="#8aa0b8"/></svg>
<svg style="left:307.90px;top:50.30px;" width="7.8" height="8" viewBox="0 0 7.8 8"><rect x="0.3" y="0.3" width="7.2" height="7.4" rx="1" fill="#6cc36c"/><rect x="1.5" y="1.5" width="4.8" height="5" fill="#4aa84a"/><path d="M5 2 L2.5 4 L5 6 Z" fill="#fff"/></svg>
<svg style="left:323.10px;top:50.30px;" width="7.8" height="8" viewBox="0 0 7.8 8"><rect x="0.3" y="0.3" width="7.2" height="7.4" rx="1" fill="#6cc36c"/><rect x="1.5" y="1.5" width="4.8" height="5" fill="#4aa84a"/><path d="M2.8 2 L5.3 4 L2.8 6 Z" fill="#fff"/></svg>
<div style="left:336.30px;top:49.00px;width:0.80px;height:12.00px;background:#c9c9c9;"></div>
<svg style="left:343.00px;top:49.80px;" width="8" height="9" viewBox="0 0 8 9"><path d="M0.5 0.5 H5 L7.5 3 V8.5 H0.5 Z" fill="#fbfbfb" stroke="#b5b5b5" stroke-width="0.7"/></svg>
<svg style="left:357.10px;top:50.00px;" width="8.5" height="8.5" viewBox="0 0 8.5 8.5"><path d="M0.8 0.8 L7.7 7.7 M7.7 0.8 L0.8 7.7" stroke="#e8402a" stroke-width="1.3"/></svg>
<svg style="left:372.50px;top:49.80px;" width="8" height="9" viewBox="0 0 8 9"><rect x="0.5" y="0.5" width="4.5" height="5.5" fill="#fafafa" stroke="#b8b8b8" stroke-width="0.7"/><rect x="3" y="3" width="4.5" height="5.5" fill="#fafafa" stroke="#b8b8b8" stroke-width="0.7"/></svg>
<svg style="left:386.60px;top:50.00px;" width="9.7" height="8.5" viewBox="0 0 9.7 8.5"><rect x="0.3" y="2" width="9" height="4.5" fill="#f2d890" stroke="#c8a050" stroke-width="0.6"/><path d="M3 0.5 L7 8" stroke="#5060a0" stroke-width="1"/><path d="M7 0.5 L3 8" stroke="#5060a0" stroke-width="0.8"/></svg>
<svg style="left:402.00px;top:49.80px;" width="8.5" height="9" viewBox="0 0 8.5 9"><path d="M0.5 0.5 H5.5 L8 3 V8.5 H0.5 Z" fill="#fbfbfb" stroke="#b0b0b0" stroke-width="0.7"/><circle cx="4.5" cy="4.8" r="2" fill="#bfe0fa" stroke="#3a8ad8" stroke-width="0.7"/><path d="M1.2 8 L3 6.3" stroke="#d09040" stroke-width="1"/></svg>
<svg style="left:417.00px;top:50.20px;" width="8" height="8" viewBox="0 0 8 8"><circle cx="4" cy="4" r="3.6" fill="#6a6a6a"/><circle cx="4.6" cy="4" r="2.3" fill="#d02a2a"/><circle cx="4.3" cy="4" r="1.2" fill="#fff"/></svg>
<svg style="left:431.90px;top:49.80px;" width="8.2" height="9" viewBox="0 0 8.2 9"><rect x="0.4" y="0.4" width="7.4" height="8.2" fill="#5a66c8" stroke="#3a46a8" stroke-width="0.6"/><rect x="2.5" y="1.5" width="3.2" height="2.5" fill="#c8d0f8"/><rect x="2.8" y="5" width="2.6" height="2.6" fill="#e8ecff"/></svg>
<div style="left:444.80px;top:49.00px;width:0.80px;height:12.00px;background:#c9c9c9;"></div>
<div style="left:446.70px;top:48.70px;width:568.30px;height:8.60px;background:#e9edef;border:1px solid #e1e5e8;"></div>
<div style="left:447px;top:59.6px;width:566px;height:1px;background:repeating-linear-gradient(90deg,#bcbcbc 0 1px,transparent 1px 6.6px);"></div>
<svg style="left:473.30px;top:48.80px;" width="4.8" height="9.2" viewBox="0 0 4.8 9.2"><path d="M0.3 0.3 H4.5 V6.5 L2.4 8.9 L0.3 6.5 Z" fill="#1e74d8"/></svg>
<div style="left:246.00px;top:62.00px;width:16.00px;height:459.40px;background:#ececec;"></div>
<div style="left:246.00px;top:62.00px;width:15.50px;height:173.00px;background:#ffffff;"></div>
<div style="left:262.00px;top:62.00px;width:753.40px;height:459.40px;background:#000000;"></div>
<div style="left:262.00px;top:62.00px;width:19.00px;height:19.00px;background:#c2c2c2;"></div>
<svg style="left:262.00px;top:62.00px;" width="753.4" height="459.4" viewBox="0 0 753.4 459.4"><text x="67.20" y="9.0" text-anchor="middle" font-family="Liberation Sans" font-size="5.5" fill="#e8e8e8">-12m</text><text x="121.80" y="9.0" text-anchor="middle" font-family="Liberation Sans" font-weight="bold" font-size="8.7" fill="#f0b000">-10m</text><text x="176.40" y="9.0" text-anchor="middle" font-family="Liberation Sans" font-size="5.5" fill="#e8e8e8">-8m</text><text x="231.00" y="9.0" text-anchor="middle" font-family="Liberation Sans" font-size="5.5" fill="#e8e8e8">-6m</text><text x="285.60" y="9.0" text-anchor="middle" font-family="Liberation Sans" font-size="5.5" fill="#e8e8e8">-4m</text><text x="340.20" y="9.0" text-anchor="middle" font-family="Liberation Sans" font-size="5.5" fill="#e8e8e8">-2m</text><text x="394.80" y="9.0" text-anchor="middle" font-family="Liberation Sans" font-weight="bold" font-size="8.7" fill="#f0b000">0m</text><text x="449.40" y="9.0" text-anchor="middle" font-family="Liberation Sans" font-size="5.5" fill="#e8e8e8">2m</text><text x="504.00" y="9.0" text-anchor="middle" font-family="Liberation Sans" font-size="5.5" fill="#e8e8e8">4m</text><text x="558.60" y="9.0" text-anchor="middle" font-family="Liberation Sans" font-size="5.5" fill="#e8e8e8">6m</text><text x="613.20" y="9.0" text-anchor="middle" font-family="Liberation Sans" font-size="5.5" fill="#e8e8e8">8m</text><text x="667.80" y="9.0" text-anchor="middle" font-family="Liberation Sans" font-weight="bold" font-size="8.7" fill="#f0b000">10m</text><text x="722.40" y="9.0" text-anchor="middle" font-family="Liberation Sans" font-size="5.5" fill="#e8e8e8">12m</text><text transform="translate(8.4 453.20) rotate(-90)" x="0" y="0" text-anchor="middle" font-family="Liberation Sans" font-size="5.5" fill="#e8e8e8">262m</text><text transform="translate(8.4 398.60) rotate(-90)" x="0" y="0" text-anchor="middle" font-family="Liberation Sans" font-size="5.5" fill="#e8e8e8">264m</text><text transform="translate(8.4 344.00) rotate(-90)" x="0" y="0" text-anchor="middle" font-family="Liberation Sans" font-size="5.5" fill="#e8e8e8">266m</text><text transform="translate(8.4 289.40) rotate(-90)" x="0" y="0" text-anchor="middle" font-family="Liberation Sans" font-size="5.5" fill="#e8e8e8">268m</text><text transform="translate(9.1 234.80) rotate(-90)" x="0" y="0" text-anchor="middle" font-family="Liberation Sans" font-weight="bold" font-size="8.7" fill="#f0b000">270m</text><text transform="translate(8.4 180.20) rotate(-90)" x="0" y="0" text-anchor="middle" font-family="Liberation Sans" font-size="5.5" fill="#e8e8e8">272m</text><text transform="translate(8.4 125.60) rotate(-90)" x="0" y="0" text-anchor="middle" font-family="Liberation Sans" font-size="5.5" fill="#e8e8e8">274m</text><text transform="translate(8.4 71.00) rotate(-90)" x="0" y="0" text-anchor="middle" font-family="Liberation Sans" font-size="5.5" fill="#e8e8e8">276m</text><text transform="translate(8.4 16.40) rotate(-90)" x="0" y="0" text-anchor="middle" font-family="Liberation Sans" font-size="5.5" fill="#e8e8e8">278m</text><g stroke="#8e8e8e" stroke-width="0.9"><path d="M23.52 15.80 V19" /><path d="M28.98 15.80 V19" /><path d="M34.44 15.80 V19" /><path d="M39.90 13.60 V19" /><path d="M45.36 15.80 V19" /><path d="M50.82 15.80 V19" /><path d="M56.28 15.80 V19" /><path d="M61.74 15.80 V19" /><path d="M67.20 11.40 V19" /><path d="M72.66 15.80 V19" /><path d="M78.12 15.80 V19" /><path d="M83.58 15.80 V19" /><path d="M89.04 15.80 V19" /><path d="M94.50 13.60 V19" /><path d="M99.96 15.80 V19" /><path d="M105.42 15.80 V19" /><path d="M110.88 15.80 V19" /><path d="M116.34 15.80 V19" /><path d="M121.80 11.40 V19" /><path d="M127.26 15.80 V19" /><path d="M132.72 15.80 V19" /><path d="M138.18 15.80 V19" /><path d="M143.64 15.80 V19" /><path d="M149.10 13.60 V19" /><path d="M154.56 15.80 V19" /><path d="M160.02 15.80 V19" /><path d="M165.48 15.80 V19" /><path d="M170.94 15.80 V19" /><path d="M176.40 11.40 V19" /><path d="M181.86 15.80 V19" /><path d="M187.32 15.80 V19" /><path d="M192.78 15.80 V19" /><path d="M198.24 15.80 V19" /><path d="M203.70 13.60 V19" /><path d="M209.16 15.80 V19" /><path d="M214.62 15.80 V19" /><path d="M220.08 15.80 V19" /><path d="M225.54 15.80 V19" /><path d="M231.00 11.40 V19" /><path d="M236.46 15.80 V19" /><path d="M241.92 15.80 V19" /><path d="M247.38 15.80 V19" /><path d="M252.84 15.80 V19" /><path d="M258.30 13.60 V19" /><path d="M263.76 15.80 V19" /><path d="M269.22 15.80 V19" /><path d="M274.68 15.80 V19" /><path d="M280.14 15.80 V19" /><path d="M285.60 11.40 V19" /><path d="M291.06 15.80 V19" /><path d="M296.52 15.80 V19" /><path d="M301.98 15.80 V19" /><path d="M307.44 15.80 V19" /><path d="M312.90 13.60 V19" /><path d="M318.36 15.80 V19" /><path d="M323.82 15.80 V19" /><path d="M329.28 15.80 V19" /><path d="M334.74 15.80 V19" /><path d="M340.20 11.40 V19" /><path d="M345.66 15.80 V19" /><path d="M351.12 15.80 V19" /><path d="M356.58 15.80 V19" /><path d="M362.04 15.80 V19" /><path d="M367.50 13.60 V19" /><path d="M372.96 15.80 V19" /><path d="M378.42 15.80 V19" /><path d="M383.88 15.80 V19" /><path d="M389.34 15.80 V19" /><path d="M394.80 11.40 V19" /><path d="M400.26 15.80 V19" /><path d="M405.72 15.80 V19" /><path d="M411.18 15.80 V19" /><path d="M416.64 15.80 V19" /><path d="M422.10 13.60 V19" /><path d="M427.56 15.80 V19" /><path d="M433.02 15.80 V19" /><path d="M438.48 15.80 V19" /><path d="M443.94 15.80 V19" /><path d="M449.40 11.40 V19" /><path d="M454.86 15.80 V19" /><path d="M460.32 15.80 V19" /><path d="M465.78 15.80 V19" /><path d="M471.24 15.80 V19" /><path d="M476.70 13.60 V19" /><path d="M482.16 15.80 V19" /><path d="M487.62 15.80 V19" /><path d="M493.08 15.80 V19" /><path d="M498.54 15.80 V19" /><path d="M504.00 11.40 V19" /><path d="M509.46 15.80 V19" /><path d="M514.92 15.80 V19" /><path d="M520.38 15.80 V19" /><path d="M525.84 15.80 V19" /><path d="M531.30 13.60 V19" /><path d="M536.76 15.80 V19" /><path d="M542.22 15.80 V19" /><path d="M547.68 15.80 V19" /><path d="M553.14 15.80 V19" /><path d="M558.60 11.40 V19" /><path d="M564.06 15.80 V19" /><path d="M569.52 15.80 V19" /><path d="M574.98 15.80 V19" /><path d="M580.44 15.80 V19" /><path d="M585.90 13.60 V19" /><path d="M591.36 15.80 V19" /><path d="M596.82 15.80 V19" /><path d="M602.28 15.80 V19" /><path d="M607.74 15.80 V19" /><path d="M613.20 11.40 V19" /><path d="M618.66 15.80 V19" /><path d="M624.12 15.80 V19" /><path d="M629.58 15.80 V19" /><path d="M635.04 15.80 V19" /><path d="M640.50 13.60 V19" /><path d="M645.96 15.80 V19" /><path d="M651.42 15.80 V19" /><path d="M656.88 15.80 V19" /><path d="M662.34 15.80 V19" /><path d="M667.80 11.40 V19" /><path d="M673.26 15.80 V19" /><path d="M678.72 15.80 V19" /><path d="M684.18 15.80 V19" /><path d="M689.64 15.80 V19" /><path d="M695.10 13.60 V19" /><path d="M700.56 15.80 V19" /><path d="M706.02 15.80 V19" /><path d="M711.48 15.80 V19" /><path d="M716.94 15.80 V19" /><path d="M722.40 11.40 V19" /><path d="M727.86 15.80 V19" /><path d="M733.32 15.80 V19" /><path d="M738.78 15.80 V19" /><path d="M744.24 15.80 V19" /><path d="M749.70 13.60 V19" /><path d="M15.60 458.66 H19" /><path d="M11.00 453.20 H19" /><path d="M15.60 447.74 H19" /><path d="M15.60 442.28 H19" /><path d="M15.60 436.82 H19" /><path d="M15.60 431.36 H19" /><path d="M13.30 425.90 H19" /><path d="M15.60 420.44 H19" /><path d="M15.60 414.98 H19" /><path d="M15.60 409.52 H19" /><path d="M15.60 404.06 H19" /><path d="M11.00 398.60 H19" /><path d="M15.60 393.14 H19" /><path d="M15.60 387.68 H19" /><path d="M15.60 382.22 H19" /><path d="M15.60 376.76 H19" /><path d="M13.30 371.30 H19" /><path d="M15.60 365.84 H19" /><path d="M15.60 360.38 H19" /><path d="M15.60 354.92 H19" /><path d="M15.60 349.46 H19" /><path d="M11.00 344.00 H19" /><path d="M15.60 338.54 H19" /><path d="M15.60 333.08 H19" /><path d="M15.60 327.62 H19" /><path d="M15.60 322.16 H19" /><path d="M13.30 316.70 H19" /><path d="M15.60 311.24 H19" /><path d="M15.60 305.78 H19" /><path d="M15.60 300.32 H19" /><path d="M15.60 294.86 H19" /><path d="M11.00 289.40 H19" /><path d="M15.60 283.94 H19" /><path d="M15.60 278.48 H19" /><path d="M15.60 273.02 H19" /><path d="M15.60 267.56 H19" /><path d="M13.30 262.10 H19" /><path d="M15.60 256.64 H19" /><path d="M15.60 251.18 H19" /><path d="M15.60 245.72 H19" /><path d="M15.60 240.26 H19" /><path d="M11.00 234.80 H19" /><path d="M15.60 229.34 H19" /><path d="M15.60 223.88 H19" /><path d="M15.60 218.42 H19" /><path d="M15.60 212.96 H19" /><path d="M13.30 207.50 H19" /><path d="M15.60 202.04 H19" /><path d="M15.60 196.58 H19" /><path d="M15.60 191.12 H19" /><path d="M15.60 185.66 H19" /><path d="M11.00 180.20 H19" /><path d="M15.60 174.74 H19" /><path d="M15.60 169.28 H19" /><path d="M15.60 163.82 H19" /><path d="M15.60 158.36 H19" /><path d="M13.30 152.90 H19" /><path d="M15.60 147.44 H19" /><path d="M15.60 141.98 H19" /><path d="M15.60 136.52 H19" /><path d="M15.60 131.06 H19" /><path d="M11.00 125.60 H19" /><path d="M15.60 120.14 H19" /><path d="M15.60 114.68 H19" /><path d="M15.60 109.22 H19" /><path d="M15.60 103.76 H19" /><path d="M13.30 98.30 H19" /><path d="M15.60 92.84 H19" /><path d="M15.60 87.38 H19" /><path d="M15.60 81.92 H19" /><path d="M15.60 76.46 H19" /><path d="M11.00 71.00 H19" /><path d="M15.60 65.54 H19" /><path d="M15.60 60.08 H19" /><path d="M15.60 54.62 H19" /><path d="M15.60 49.16 H19" /><path d="M13.30 43.70 H19" /><path d="M15.60 38.24 H19" /><path d="M15.60 32.78 H19" /><path d="M15.60 27.32 H19" /><path d="M15.60 21.86 H19" /></g><path d="M19 19.3 H753.4" stroke="#8a8a8a" stroke-width="1"/><path d="M18.7 19 V459.4" stroke="#8a8a8a" stroke-width="1"/><path d="M0 95.50 L309.20 225.40 L753.40 282.80" stroke="#008c00" stroke-width="1" fill="none"/><text x="21" y="28.2" font-family="Liberation Sans" font-weight="bold" font-size="8.65" fill="#00b800">AA</text><text x="21" y="41.7" font-family="Liberation Sans" font-weight="bold" font-size="8.6" fill="#00b800">0+000.00</text><g transform="translate(394.80 0)"><path d="M-5.3 16.6 L-3.2 13 L-0.9 15.6 Z M5.3 16.6 L3.2 13 L0.9 15.6 Z" fill="#d40000"/><path d="M-4 16.2 C-2 18 2 19.5 4 22.5 M4 16.2 C2 18 -2 19.5 -4 22.5" stroke="#c00000" stroke-width="0.9" fill="none"/></g><path d="M395.00 433 V459" stroke="#b00000" stroke-width="1" stroke-dasharray="2.2 2.2"/><rect x="0" y="0" width="19" height="19" fill="#c2c2c2"/></svg>
<div style="left:1015.4px;top:62px;width:8.6px;height:459.4px;background:linear-gradient(90deg,#5e5e5e,#8e8e8e 50%,#b4b4b4);"></div>
<div style="left:1015.4px;top:281.7px;width:8.6px;height:217px;background:linear-gradient(90deg,#dadada,#c4c4c4 50%,#a4a4a4);"></div>
<div style="left:1017.50px;top:397.00px;width:4.50px;height:0.60px;background:#888;"></div>
<div style="left:1017.50px;top:398.60px;width:4.50px;height:0.60px;background:#888;"></div>
<svg style="left:1015.40px;top:62.00px;" width="8.6" height="8.8" viewBox="0 0 8.6 8.8"><rect x="0" y="0" width="8.6" height="8.8" fill="#f6b800"/><path d="M2.15 5.456 L4.3 3.08 L6.449999999999999 5.456" stroke="#111" stroke-width="1.3" fill="none"/></svg>
<svg style="left:1015.40px;top:512.80px;" width="8.6" height="7.8" viewBox="0 0 8.6 7.8"><rect x="0" y="0" width="8.6" height="7.8" fill="#f6b800"/><path d="M2.15 2.964 L4.3 5.07 L6.449999999999999 2.964" stroke="#111" stroke-width="1.3" fill="none"/></svg>
<div style="left:1015.40px;top:521.40px;width:8.60px;height:8.40px;background:#000000;"></div>
<div style="left:262px;top:521.4px;width:753.4px;height:8.4px;background:linear-gradient(180deg,#5e5e5e,#8e8e8e 50%,#b4b4b4);"></div>
<div style="left:531px;top:521.4px;width:207.6px;height:8.4px;background:linear-gradient(180deg,#dadada,#c4c4c4 50%,#a4a4a4);"></div>
<div style="left:635.00px;top:523.50px;width:0.60px;height:4.50px;background:#888;"></div>
<div style="left:636.60px;top:523.50px;width:0.60px;height:4.50px;background:#888;"></div>
<svg style="left:262.00px;top:521.40px;" width="8.2" height="8.4" viewBox="0 0 8.2 8.4"><rect x="0" y="0" width="8.2" height="8.4" fill="#f6b800"/><path d="M5.084 2.1 L2.8699999999999997 4.2 L5.084 6.300000000000001" stroke="#111" stroke-width="1.3" fill="none"/></svg>
<svg style="left:1006.80px;top:521.40px;" width="8.2" height="8.4" viewBox="0 0 8.2 8.4"><rect x="0" y="0" width="8.2" height="8.4" fill="#f6b800"/><path d="M3.1159999999999997 2.1 L5.33 4.2 L3.1159999999999997 6.300000000000001" stroke="#111" stroke-width="1.3" fill="none"/></svg>
<div style="left:246.00px;top:529.80px;width:778.00px;height:9.80px;background:#f0f0f0;"></div>
<div class="t" style="left:247.40px;top:534px;font-size:6.40px;line-height:6.40px;color:#1c1c22;white-space:pre;font-family:'Liberation Sans',sans-serif;transform:scaleX(0.958);transform-origin:0 0;">X=-9.81  H=278.57</div>
<div style="left:485.60px;top:530.50px;width:0.80px;height:8.50px;background:#d4d4d4;"></div>
<div style="left:549.50px;top:530.50px;width:0.80px;height:8.50px;background:#d4d4d4;"></div>
<div style="left:683.60px;top:530.50px;width:0.80px;height:8.50px;background:#d4d4d4;"></div>
<div style="left:246px;top:539.6px;width:778px;height:15.4px;background:linear-gradient(#fafafa,#e6e6e6);"></div>
<div class="t" style="left:258.60px;top:546px;font-size:6.60px;line-height:6.60px;color:#8fb08f;white-space:pre;font-family:'Liberation Sans',sans-serif;transform:scaleX(0.877);transform-origin:0 0;">2D</div>
<svg style="left:270.90px;top:542.00px;" width="12" height="8.6" viewBox="0 0 12 8.6"><path d="M0.5 0.5 H11.5 V3.5 L6 8.2 L0.5 3.5 Z" fill="#a4d0a0" stroke="#74ae70" stroke-width="0.7"/><path d="M2.5 2 H9.5 L6 5.2 Z" fill="#d8ecd6"/></svg>
<div style="left:254.7px;top:551.8px;width:32.3px;height:1px;background:repeating-linear-gradient(90deg,#8cbc88 0 1px,transparent 1px 2.2px);"></div>
<svg style="left:307.00px;top:544.00px;" width="32.5" height="8.2" viewBox="0 0 32.5 8.2"><path d="M0.5 7.7 V4.8 C8 0.3 24 0.3 32 4.8 V7.7 Z" fill="#c2e2be"/><path d="M0.5 4.8 C8 0.3 24 0.3 32 4.8" stroke="#5a9a56" stroke-width="0.8" fill="none"/><path d="M4 5.6 H28" stroke="#6aa866" stroke-width="0.6" stroke-dasharray="1 1.3"/><path d="M1 3.5 L2.5 4.5 M30 3.5 L31.5 2.5" stroke="#5a9a56" stroke-width="0.6"/></svg>
<div style="left:349.00px;top:540.10px;width:52.00px;height:14.90px;background:#a8bdea;border:1px solid #6f90de;"></div>
<svg style="left:359.00px;top:544.30px;" width="32" height="8.2" viewBox="0 0 32 8.2"><path d="M0 3.2 L4 6 L9 1.8 H23 L28 6 L32 3.2 V8.2 H0 Z" fill="#b4d8a8"/><path d="M0 3.2 L4 6 L9 1.8 H23 L28 6 L32 3.2" stroke="#5a9a56" stroke-width="0.9" fill="none"/><path d="M16 0 V8" stroke="#5a9a56" stroke-width="0.6" stroke-dasharray="1 1.2"/></svg>
<div class="t" style="left:413.70px;top:546px;font-size:6.60px;line-height:6.60px;color:#8fb08f;white-space:pre;font-family:'Liberation Sans',sans-serif;transform:scaleX(0.865);transform-origin:0 0;">3D</div>
<svg style="left:426.00px;top:542.00px;" width="9" height="9" viewBox="0 0 9 9"><path d="M0.5 8.5 V1.5 L2.5 0.5 L5 2.8 L8.5 6 V8.5 Z" fill="#9ccc98" stroke="#78b074" stroke-width="0.7"/></svg>
<div style="left:410.3px;top:551.8px;width:32px;height:1px;background:repeating-linear-gradient(90deg,#8cbc88 0 1px,transparent 1px 2.2px);"></div>
<div style="left:345.2px;top:85.8px;width:324.00000000000006px;height:409.2px;background:#f0f0f0;border:1px solid #3d8ee0;box-shadow:0 0 3px rgba(0,0,0,0.35);"></div>
<div style="left:346.20px;top:86.80px;width:322.00px;height:15.20px;background:#ffffff;"></div>
<svg style="left:350.00px;top:89.00px;" width="9.5" height="9.5" viewBox="0 0 9.5 9.5"><path d="M0.5 0.8 H9 L4.75 9 Z" fill="#f6a64a"/><path d="M2.6 2.2 H6.9 L4.75 6.4 Z" fill="#fde6c8"/><path d="M3.6 2.6 H5.9 L4.75 4.9 Z" fill="#f6a64a"/></svg>
<div class="t" style="left:361.60px;top:93px;font-size:6.60px;line-height:6.60px;color:#1a1a1a;white-space:pre;font-family:'Liberation Sans',sans-serif;">Μαζικός Υπολογισμός Διατομών</div>
<div style="left:604.80px;top:94.00px;width:5.90px;height:0.80px;background:#444;"></div>
<svg style="left:628.80px;top:90.80px;" width="5.6" height="5.6" viewBox="0 0 5.6 5.6"><rect x="0.4" y="0.4" width="4.8" height="4.8" fill="none" stroke="#c4c4c4" stroke-width="0.8"/></svg>
<svg style="left:652.30px;top:90.50px;" width="7" height="7" viewBox="0 0 7 7"><path d="M0.6 0.6 L6.4 6.4 M6.4 0.6 L0.6 6.4" stroke="#333" stroke-width="0.9"/></svg>
<div class="t" style="left:352.80px;top:107px;font-size:6.40px;line-height:6.40px;color:#1c1c22;white-space:pre;font-family:'Liberation Sans',sans-serif;transform:scaleX(0.904);transform-origin:0 0;">Επιλεγμένες διατομές 90/90</div>
<div style="left:350.40px;top:108.60px;width:1.00px;height:288.40px;background:#e0e0e0;"></div>
<div style="left:520.40px;top:108.60px;width:1.00px;height:288.40px;background:#e0e0e0;"></div>
<div style="left:350.40px;top:396.00px;width:171.00px;height:1.00px;background:#e0e0e0;"></div>
<div style="left:350.40px;top:108.60px;width:1.60px;height:1.00px;background:#e0e0e0;"></div>
<div style="left:425.50px;top:108.60px;width:95.90px;height:1.00px;background:#e0e0e0;"></div>
<div style="left:350.90px;top:115.10px;width:164.20px;height:279.90px;background:#ffffff;border:1px solid #acacac;"></div>
<div class="t" style="left:354.80px;top:121px;font-size:6.40px;line-height:6.40px;color:#333;white-space:pre;font-family:'Liberation Sans',sans-serif;transform:scaleX(0.905);transform-origin:0 0;">Διατομή</div>
<div class="t" style="left:386.50px;top:121px;font-size:6.40px;line-height:6.40px;color:#333;white-space:pre;font-family:'Liberation Sans',sans-serif;transform:scaleX(0.820);transform-origin:0 0;">Χ.Θ.</div>
<div class="t" style="left:421.70px;top:121px;font-size:6.40px;line-height:6.40px;color:#333;white-space:pre;font-family:'Liberation Sans',sans-serif;transform:scaleX(0.872);transform-origin:0 0;">Κλάδοι</div>
<div class="t" style="left:445.80px;top:121px;font-size:6.40px;line-height:6.40px;color:#333;white-space:pre;font-family:'Liberation Sans',sans-serif;transform:scaleX(0.894);transform-origin:0 0;">Τυπ. Διατομή</div>
<div style="left:383.60px;top:116.50px;width:0.80px;height:12.50px;background:#e6e6e6;"></div>
<div style="left:418.30px;top:116.50px;width:0.80px;height:12.50px;background:#e6e6e6;"></div>
<div style="left:442.30px;top:116.50px;width:0.80px;height:12.50px;background:#e6e6e6;"></div>
<div style="left:503.40px;top:116.50px;width:0.80px;height:12.50px;background:#e6e6e6;"></div>
<svg style="left:354.60px;top:129.85px;" width="7.7" height="7.7" viewBox="0 0 7.7 7.7"><circle cx="3.85" cy="3.85" r="3.70" fill="#b2b2b2"/><circle cx="3.55" cy="3.55" r="2.75" fill="#d4d4d4"/><rect x="3.05" y="0.95" width="1.6" height="3.7" fill="#e8181a"/><rect x="3.05" y="5.25" width="1.6" height="1.3" fill="#e8181a"/></svg>
<div class="t" style="left:363.60px;top:132px;font-size:6.40px;line-height:6.40px;color:#1c1cf2;white-space:pre;font-family:'Liberation Sans',sans-serif;">AA</div>
<div class="t" style="left:387.00px;top:132px;font-size:6.40px;line-height:6.40px;color:#1c1cf2;white-space:pre;font-family:'Liberation Sans',sans-serif;transform:scaleX(0.945);transform-origin:0 0;">0+000.00</div>
<div class="t" style="left:421.60px;top:132px;font-size:6.40px;line-height:6.40px;color:#1c1cf2;white-space:pre;font-family:'Liberation Sans',sans-serif;">1</div>
<div class="t" style="left:446.30px;top:132px;font-size:6.40px;line-height:6.40px;color:#1c1cf2;white-space:pre;font-family:'Liberation Sans',sans-serif;transform:scaleX(0.917);transform-origin:0 0;">* Σημείο *</div>
<svg style="left:354.60px;top:138.90px;" width="7.7" height="7.7" viewBox="0 0 7.7 7.7"><circle cx="3.85" cy="3.85" r="3.70" fill="#b2b2b2"/><circle cx="3.55" cy="3.55" r="2.75" fill="#d4d4d4"/><rect x="3.05" y="0.95" width="1.6" height="3.7" fill="#e8181a"/><rect x="3.05" y="5.25" width="1.6" height="1.3" fill="#e8181a"/></svg>
<div class="t" style="left:363.60px;top:141px;font-size:6.40px;line-height:6.40px;color:#1c1cf2;white-space:pre;font-family:'Liberation Sans',sans-serif;">1</div>
<div class="t" style="left:387.00px;top:141px;font-size:6.40px;line-height:6.40px;color:#1c1cf2;white-space:pre;font-family:'Liberation Sans',sans-serif;transform:scaleX(0.945);transform-origin:0 0;">0+020.00</div>
<div class="t" style="left:421.60px;top:141px;font-size:6.40px;line-height:6.40px;color:#1c1cf2;white-space:pre;font-family:'Liberation Sans',sans-serif;">1</div>
<div class="t" style="left:446.30px;top:141px;font-size:6.40px;line-height:6.40px;color:#1c1cf2;white-space:pre;font-family:'Liberation Sans',sans-serif;transform:scaleX(0.917);transform-origin:0 0;">* Σημείο *</div>
<svg style="left:354.60px;top:147.95px;" width="7.7" height="7.7" viewBox="0 0 7.7 7.7"><circle cx="3.85" cy="3.85" r="3.70" fill="#b2b2b2"/><circle cx="3.55" cy="3.55" r="2.75" fill="#d4d4d4"/><rect x="3.05" y="0.95" width="1.6" height="3.7" fill="#e8181a"/><rect x="3.05" y="5.25" width="1.6" height="1.3" fill="#e8181a"/></svg>
<div class="t" style="left:363.60px;top:150px;font-size:6.40px;line-height:6.40px;color:#1c1cf2;white-space:pre;font-family:'Liberation Sans',sans-serif;">2</div>
<div class="t" style="left:387.00px;top:150px;font-size:6.40px;line-height:6.40px;color:#1c1cf2;white-space:pre;font-family:'Liberation Sans',sans-serif;transform:scaleX(0.945);transform-origin:0 0;">0+040.00</div>
<div class="t" style="left:421.60px;top:150px;font-size:6.40px;line-height:6.40px;color:#1c1cf2;white-space:pre;font-family:'Liberation Sans',sans-serif;">1</div>
<div class="t" style="left:446.30px;top:150px;font-size:6.40px;line-height:6.40px;color:#1c1cf2;white-space:pre;font-family:'Liberation Sans',sans-serif;transform:scaleX(0.917);transform-origin:0 0;">* Σημείο *</div>
<svg style="left:354.60px;top:157.00px;" width="7.7" height="7.7" viewBox="0 0 7.7 7.7"><circle cx="3.85" cy="3.85" r="3.70" fill="#b2b2b2"/><circle cx="3.55" cy="3.55" r="2.75" fill="#d4d4d4"/><rect x="3.05" y="0.95" width="1.6" height="3.7" fill="#e8181a"/><rect x="3.05" y="5.25" width="1.6" height="1.3" fill="#e8181a"/></svg>
<div class="t" style="left:363.60px;top:159px;font-size:6.40px;line-height:6.40px;color:#1c1cf2;white-space:pre;font-family:'Liberation Sans',sans-serif;">3</div>
<div class="t" style="left:387.00px;top:159px;font-size:6.40px;line-height:6.40px;color:#1c1cf2;white-space:pre;font-family:'Liberation Sans',sans-serif;transform:scaleX(0.945);transform-origin:0 0;">0+060.00</div>
<div class="t" style="left:421.60px;top:159px;font-size:6.40px;line-height:6.40px;color:#1c1cf2;white-space:pre;font-family:'Liberation Sans',sans-serif;">1</div>
<div class="t" style="left:446.30px;top:159px;font-size:6.40px;line-height:6.40px;color:#1c1cf2;white-space:pre;font-family:'Liberation Sans',sans-serif;transform:scaleX(0.917);transform-origin:0 0;">* Σημείο *</div>
<svg style="left:354.60px;top:166.05px;" width="7.7" height="7.7" viewBox="0 0 7.7 7.7"><circle cx="3.85" cy="3.85" r="3.70" fill="#b2b2b2"/><circle cx="3.55" cy="3.55" r="2.75" fill="#d4d4d4"/><rect x="3.05" y="0.95" width="1.6" height="3.7" fill="#e8181a"/><rect x="3.05" y="5.25" width="1.6" height="1.3" fill="#e8181a"/></svg>
<div class="t" style="left:363.60px;top:168px;font-size:6.40px;line-height:6.40px;color:#1c1cf2;white-space:pre;font-family:'Liberation Sans',sans-serif;">4</div>
<div class="t" style="left:387.00px;top:168px;font-size:6.40px;line-height:6.40px;color:#1c1cf2;white-space:pre;font-family:'Liberation Sans',sans-serif;transform:scaleX(0.945);transform-origin:0 0;">0+080.00</div>
<div class="t" style="left:421.60px;top:168px;font-size:6.40px;line-height:6.40px;color:#1c1cf2;white-space:pre;font-family:'Liberation Sans',sans-serif;">1</div>
<div class="t" style="left:446.30px;top:168px;font-size:6.40px;line-height:6.40px;color:#1c1cf2;white-space:pre;font-family:'Liberation Sans',sans-serif;transform:scaleX(0.917);transform-origin:0 0;">* Σημείο *</div>
<svg style="left:354.60px;top:175.10px;" width="7.7" height="7.7" viewBox="0 0 7.7 7.7"><circle cx="3.85" cy="3.85" r="3.70" fill="#b2b2b2"/><circle cx="3.55" cy="3.55" r="2.75" fill="#d4d4d4"/><rect x="3.05" y="0.95" width="1.6" height="3.7" fill="#e8181a"/><rect x="3.05" y="5.25" width="1.6" height="1.3" fill="#e8181a"/></svg>
<div class="t" style="left:363.60px;top:178px;font-size:6.40px;line-height:6.40px;color:#1c1cf2;white-space:pre;font-family:'Liberation Sans',sans-serif;">5</div>
<div class="t" style="left:387.00px;top:178px;font-size:6.40px;line-height:6.40px;color:#1c1cf2;white-space:pre;font-family:'Liberation Sans',sans-serif;transform:scaleX(0.945);transform-origin:0 0;">0+100.00</div>
<div class="t" style="left:421.60px;top:178px;font-size:6.40px;line-height:6.40px;color:#1c1cf2;white-space:pre;font-family:'Liberation Sans',sans-serif;">1</div>
<div class="t" style="left:446.30px;top:178px;font-size:6.40px;line-height:6.40px;color:#1c1cf2;white-space:pre;font-family:'Liberation Sans',sans-serif;transform:scaleX(0.917);transform-origin:0 0;">* Σημείο *</div>
<svg style="left:354.60px;top:184.15px;" width="7.7" height="7.7" viewBox="0 0 7.7 7.7"><circle cx="3.85" cy="3.85" r="3.70" fill="#b2b2b2"/><circle cx="3.55" cy="3.55" r="2.75" fill="#d4d4d4"/><rect x="3.05" y="0.95" width="1.6" height="3.7" fill="#e8181a"/><rect x="3.05" y="5.25" width="1.6" height="1.3" fill="#e8181a"/></svg>
<div class="t" style="left:363.60px;top:187px;font-size:6.40px;line-height:6.40px;color:#1c1cf2;white-space:pre;font-family:'Liberation Sans',sans-serif;">6</div>
<div class="t" style="left:387.00px;top:187px;font-size:6.40px;line-height:6.40px;color:#1c1cf2;white-space:pre;font-family:'Liberation Sans',sans-serif;transform:scaleX(0.945);transform-origin:0 0;">0+120.00</div>
<div class="t" style="left:421.60px;top:187px;font-size:6.40px;line-height:6.40px;color:#1c1cf2;white-space:pre;font-family:'Liberation Sans',sans-serif;">1</div>
<div class="t" style="left:446.30px;top:187px;font-size:6.40px;line-height:6.40px;color:#1c1cf2;white-space:pre;font-family:'Liberation Sans',sans-serif;transform:scaleX(0.917);transform-origin:0 0;">* Σημείο *</div>
<svg style="left:354.60px;top:193.20px;" width="7.7" height="7.7" viewBox="0 0 7.7 7.7"><circle cx="3.85" cy="3.85" r="3.70" fill="#b2b2b2"/><circle cx="3.55" cy="3.55" r="2.75" fill="#d4d4d4"/><rect x="3.05" y="0.95" width="1.6" height="3.7" fill="#e8181a"/><rect x="3.05" y="5.25" width="1.6" height="1.3" fill="#e8181a"/></svg>
<div class="t" style="left:363.60px;top:196px;font-size:6.40px;line-height:6.40px;color:#1c1cf2;white-space:pre;font-family:'Liberation Sans',sans-serif;">7</div>
<div class="t" style="left:387.00px;top:196px;font-size:6.40px;line-height:6.40px;color:#1c1cf2;white-space:pre;font-family:'Liberation Sans',sans-serif;transform:scaleX(0.945);transform-origin:0 0;">0+140.00</div>
<div class="t" style="left:421.60px;top:196px;font-size:6.40px;line-height:6.40px;color:#1c1cf2;white-space:pre;font-family:'Liberation Sans',sans-serif;">1</div>
<div class="t" style="left:446.30px;top:196px;font-size:6.40px;line-height:6.40px;color:#1c1cf2;white-space:pre;font-family:'Liberation Sans',sans-serif;transform:scaleX(0.917);transform-origin:0 0;">* Σημείο *</div>
<svg style="left:354.60px;top:202.25px;" width="7.7" height="7.7" viewBox="0 0 7.7 7.7"><circle cx="3.85" cy="3.85" r="3.70" fill="#b2b2b2"/><circle cx="3.55" cy="3.55" r="2.75" fill="#d4d4d4"/><rect x="3.05" y="0.95" width="1.6" height="3.7" fill="#e8181a"/><rect x="3.05" y="5.25" width="1.6" height="1.3" fill="#e8181a"/></svg>
<div class="t" style="left:363.60px;top:205px;font-size:6.40px;line-height:6.40px;color:#1c1cf2;white-space:pre;font-family:'Liberation Sans',sans-serif;">A2</div>
<div class="t" style="left:387.00px;top:205px;font-size:6.40px;line-height:6.40px;color:#1c1cf2;white-space:pre;font-family:'Liberation Sans',sans-serif;transform:scaleX(0.945);transform-origin:0 0;">0+151.58</div>
<div class="t" style="left:421.60px;top:205px;font-size:6.40px;line-height:6.40px;color:#1c1cf2;white-space:pre;font-family:'Liberation Sans',sans-serif;">1</div>
<div class="t" style="left:446.30px;top:205px;font-size:6.40px;line-height:6.40px;color:#1c1cf2;white-space:pre;font-family:'Liberation Sans',sans-serif;transform:scaleX(0.917);transform-origin:0 0;">* Σημείο *</div>
<svg style="left:354.60px;top:211.30px;" width="7.7" height="7.7" viewBox="0 0 7.7 7.7"><circle cx="3.85" cy="3.85" r="3.70" fill="#b2b2b2"/><circle cx="3.55" cy="3.55" r="2.75" fill="#d4d4d4"/><rect x="3.05" y="0.95" width="1.6" height="3.7" fill="#e8181a"/><rect x="3.05" y="5.25" width="1.6" height="1.3" fill="#e8181a"/></svg>
<div class="t" style="left:363.60px;top:214px;font-size:6.40px;line-height:6.40px;color:#1c1cf2;white-space:pre;font-family:'Liberation Sans',sans-serif;">8</div>
<div class="t" style="left:387.00px;top:214px;font-size:6.40px;line-height:6.40px;color:#1c1cf2;white-space:pre;font-family:'Liberation Sans',sans-serif;transform:scaleX(0.945);transform-origin:0 0;">0+171.58</div>
<div class="t" style="left:421.60px;top:214px;font-size:6.40px;line-height:6.40px;color:#1c1cf2;white-space:pre;font-family:'Liberation Sans',sans-serif;">1</div>
<div class="t" style="left:446.30px;top:214px;font-size:6.40px;line-height:6.40px;color:#1c1cf2;white-space:pre;font-family:'Liberation Sans',sans-serif;transform:scaleX(0.917);transform-origin:0 0;">* Σημείο *</div>
<svg style="left:354.60px;top:220.35px;" width="7.7" height="7.7" viewBox="0 0 7.7 7.7"><circle cx="3.85" cy="3.85" r="3.70" fill="#b2b2b2"/><circle cx="3.55" cy="3.55" r="2.75" fill="#d4d4d4"/><rect x="3.05" y="0.95" width="1.6" height="3.7" fill="#e8181a"/><rect x="3.05" y="5.25" width="1.6" height="1.3" fill="#e8181a"/></svg>
<div class="t" style="left:363.60px;top:223px;font-size:6.40px;line-height:6.40px;color:#1c1cf2;white-space:pre;font-family:'Liberation Sans',sans-serif;">9</div>
<div class="t" style="left:387.00px;top:223px;font-size:6.40px;line-height:6.40px;color:#1c1cf2;white-space:pre;font-family:'Liberation Sans',sans-serif;transform:scaleX(0.945);transform-origin:0 0;">0+191.58</div>
<div class="t" style="left:421.60px;top:223px;font-size:6.40px;line-height:6.40px;color:#1c1cf2;white-space:pre;font-family:'Liberation Sans',sans-serif;">1</div>
<div class="t" style="left:446.30px;top:223px;font-size:6.40px;line-height:6.40px;color:#1c1cf2;white-space:pre;font-family:'Liberation Sans',sans-serif;transform:scaleX(0.917);transform-origin:0 0;">* Σημείο *</div>
<svg style="left:354.60px;top:229.40px;" width="7.7" height="7.7" viewBox="0 0 7.7 7.7"><circle cx="3.85" cy="3.85" r="3.70" fill="#b2b2b2"/><circle cx="3.55" cy="3.55" r="2.75" fill="#d4d4d4"/><rect x="3.05" y="0.95" width="1.6" height="3.7" fill="#e8181a"/><rect x="3.05" y="5.25" width="1.6" height="1.3" fill="#e8181a"/></svg>
<div class="t" style="left:363.60px;top:232px;font-size:6.40px;line-height:6.40px;color:#1c1cf2;white-space:pre;font-family:'Liberation Sans',sans-serif;">Ω2</div>
<div class="t" style="left:387.00px;top:232px;font-size:6.40px;line-height:6.40px;color:#1c1cf2;white-space:pre;font-family:'Liberation Sans',sans-serif;transform:scaleX(0.945);transform-origin:0 0;">0+201.58</div>
<div class="t" style="left:421.60px;top:232px;font-size:6.40px;line-height:6.40px;color:#1c1cf2;white-space:pre;font-family:'Liberation Sans',sans-serif;">1</div>
<div class="t" style="left:446.30px;top:232px;font-size:6.40px;line-height:6.40px;color:#1c1cf2;white-space:pre;font-family:'Liberation Sans',sans-serif;transform:scaleX(0.917);transform-origin:0 0;">* Σημείο *</div>
<svg style="left:354.60px;top:238.45px;" width="7.7" height="7.7" viewBox="0 0 7.7 7.7"><circle cx="3.85" cy="3.85" r="3.70" fill="#b2b2b2"/><circle cx="3.55" cy="3.55" r="2.75" fill="#d4d4d4"/><rect x="3.05" y="0.95" width="1.6" height="3.7" fill="#e8181a"/><rect x="3.05" y="5.25" width="1.6" height="1.3" fill="#e8181a"/></svg>
<div class="t" style="left:363.60px;top:241px;font-size:6.40px;line-height:6.40px;color:#1c1cf2;white-space:pre;font-family:'Liberation Sans',sans-serif;">10</div>
<div class="t" style="left:387.00px;top:241px;font-size:6.40px;line-height:6.40px;color:#1c1cf2;white-space:pre;font-family:'Liberation Sans',sans-serif;transform:scaleX(0.945);transform-origin:0 0;">0+221.58</div>
<div class="t" style="left:421.60px;top:241px;font-size:6.40px;line-height:6.40px;color:#1c1cf2;white-space:pre;font-family:'Liberation Sans',sans-serif;">1</div>
<div class="t" style="left:446.30px;top:241px;font-size:6.40px;line-height:6.40px;color:#1c1cf2;white-space:pre;font-family:'Liberation Sans',sans-serif;transform:scaleX(0.917);transform-origin:0 0;">* Σημείο *</div>
<svg style="left:354.60px;top:247.50px;" width="7.7" height="7.7" viewBox="0 0 7.7 7.7"><circle cx="3.85" cy="3.85" r="3.70" fill="#b2b2b2"/><circle cx="3.55" cy="3.55" r="2.75" fill="#d4d4d4"/><rect x="3.05" y="0.95" width="1.6" height="3.7" fill="#e8181a"/><rect x="3.05" y="5.25" width="1.6" height="1.3" fill="#e8181a"/></svg>
<div class="t" style="left:363.60px;top:250px;font-size:6.40px;line-height:6.40px;color:#1c1cf2;white-space:pre;font-family:'Liberation Sans',sans-serif;">11</div>
<div class="t" style="left:387.00px;top:250px;font-size:6.40px;line-height:6.40px;color:#1c1cf2;white-space:pre;font-family:'Liberation Sans',sans-serif;transform:scaleX(0.945);transform-origin:0 0;">0+241.58</div>
<div class="t" style="left:421.60px;top:250px;font-size:6.40px;line-height:6.40px;color:#1c1cf2;white-space:pre;font-family:'Liberation Sans',sans-serif;">1</div>
<div class="t" style="left:446.30px;top:250px;font-size:6.40px;line-height:6.40px;color:#1c1cf2;white-space:pre;font-family:'Liberation Sans',sans-serif;transform:scaleX(0.917);transform-origin:0 0;">* Σημείο *</div>
<svg style="left:354.60px;top:256.55px;" width="7.7" height="7.7" viewBox="0 0 7.7 7.7"><circle cx="3.85" cy="3.85" r="3.70" fill="#b2b2b2"/><circle cx="3.55" cy="3.55" r="2.75" fill="#d4d4d4"/><rect x="3.05" y="0.95" width="1.6" height="3.7" fill="#e8181a"/><rect x="3.05" y="5.25" width="1.6" height="1.3" fill="#e8181a"/></svg>
<div class="t" style="left:363.60px;top:259px;font-size:6.40px;line-height:6.40px;color:#1c1cf2;white-space:pre;font-family:'Liberation Sans',sans-serif;">Δ2</div>
<div class="t" style="left:387.00px;top:259px;font-size:6.40px;line-height:6.40px;color:#1c1cf2;white-space:pre;font-family:'Liberation Sans',sans-serif;transform:scaleX(0.945);transform-origin:0 0;">0+257.86</div>
<div class="t" style="left:421.60px;top:259px;font-size:6.40px;line-height:6.40px;color:#1c1cf2;white-space:pre;font-family:'Liberation Sans',sans-serif;">1</div>
<div class="t" style="left:446.30px;top:259px;font-size:6.40px;line-height:6.40px;color:#1c1cf2;white-space:pre;font-family:'Liberation Sans',sans-serif;transform:scaleX(0.917);transform-origin:0 0;">* Σημείο *</div>
<svg style="left:354.60px;top:265.60px;" width="7.7" height="7.7" viewBox="0 0 7.7 7.7"><circle cx="3.85" cy="3.85" r="3.70" fill="#b2b2b2"/><circle cx="3.55" cy="3.55" r="2.75" fill="#d4d4d4"/><rect x="3.05" y="0.95" width="1.6" height="3.7" fill="#e8181a"/><rect x="3.05" y="5.25" width="1.6" height="1.3" fill="#e8181a"/></svg>
<div class="t" style="left:363.60px;top:268px;font-size:6.40px;line-height:6.40px;color:#1c1cf2;white-space:pre;font-family:'Liberation Sans',sans-serif;">12</div>
<div class="t" style="left:387.00px;top:268px;font-size:6.40px;line-height:6.40px;color:#1c1cf2;white-space:pre;font-family:'Liberation Sans',sans-serif;transform:scaleX(0.945);transform-origin:0 0;">0+274.13</div>
<div class="t" style="left:421.60px;top:268px;font-size:6.40px;line-height:6.40px;color:#1c1cf2;white-space:pre;font-family:'Liberation Sans',sans-serif;">1</div>
<div class="t" style="left:446.30px;top:268px;font-size:6.40px;line-height:6.40px;color:#1c1cf2;white-space:pre;font-family:'Liberation Sans',sans-serif;transform:scaleX(0.917);transform-origin:0 0;">* Σημείο *</div>
<svg style="left:354.60px;top:274.65px;" width="7.7" height="7.7" viewBox="0 0 7.7 7.7"><circle cx="3.85" cy="3.85" r="3.70" fill="#b2b2b2"/><circle cx="3.55" cy="3.55" r="2.75" fill="#d4d4d4"/><rect x="3.05" y="0.95" width="1.6" height="3.7" fill="#e8181a"/><rect x="3.05" y="5.25" width="1.6" height="1.3" fill="#e8181a"/></svg>
<div class="t" style="left:363.60px;top:277px;font-size:6.40px;line-height:6.40px;color:#1c1cf2;white-space:pre;font-family:'Liberation Sans',sans-serif;">13</div>
<div class="t" style="left:387.00px;top:277px;font-size:6.40px;line-height:6.40px;color:#1c1cf2;white-space:pre;font-family:'Liberation Sans',sans-serif;transform:scaleX(0.945);transform-origin:0 0;">0+294.13</div>
<div class="t" style="left:421.60px;top:277px;font-size:6.40px;line-height:6.40px;color:#1c1cf2;white-space:pre;font-family:'Liberation Sans',sans-serif;">1</div>
<div class="t" style="left:446.30px;top:277px;font-size:6.40px;line-height:6.40px;color:#1c1cf2;white-space:pre;font-family:'Liberation Sans',sans-serif;transform:scaleX(0.917);transform-origin:0 0;">* Σημείο *</div>
<svg style="left:354.60px;top:283.70px;" width="7.7" height="7.7" viewBox="0 0 7.7 7.7"><circle cx="3.85" cy="3.85" r="3.70" fill="#b2b2b2"/><circle cx="3.55" cy="3.55" r="2.75" fill="#d4d4d4"/><rect x="3.05" y="0.95" width="1.6" height="3.7" fill="#e8181a"/><rect x="3.05" y="5.25" width="1.6" height="1.3" fill="#e8181a"/></svg>
<div class="t" style="left:363.60px;top:286px;font-size:6.40px;line-height:6.40px;color:#1c1cf2;white-space:pre;font-family:'Liberation Sans',sans-serif;">Ω'2</div>
<div class="t" style="left:387.00px;top:286px;font-size:6.40px;line-height:6.40px;color:#1c1cf2;white-space:pre;font-family:'Liberation Sans',sans-serif;transform:scaleX(0.945);transform-origin:0 0;">0+314.13</div>
<div class="t" style="left:421.60px;top:286px;font-size:6.40px;line-height:6.40px;color:#1c1cf2;white-space:pre;font-family:'Liberation Sans',sans-serif;">1</div>
<div class="t" style="left:446.30px;top:286px;font-size:6.40px;line-height:6.40px;color:#1c1cf2;white-space:pre;font-family:'Liberation Sans',sans-serif;transform:scaleX(0.917);transform-origin:0 0;">* Σημείο *</div>
<svg style="left:354.60px;top:292.75px;" width="7.7" height="7.7" viewBox="0 0 7.7 7.7"><circle cx="3.85" cy="3.85" r="3.70" fill="#b2b2b2"/><circle cx="3.55" cy="3.55" r="2.75" fill="#d4d4d4"/><rect x="3.05" y="0.95" width="1.6" height="3.7" fill="#e8181a"/><rect x="3.05" y="5.25" width="1.6" height="1.3" fill="#e8181a"/></svg>
<div class="t" style="left:363.60px;top:295px;font-size:6.40px;line-height:6.40px;color:#1c1cf2;white-space:pre;font-family:'Liberation Sans',sans-serif;">14</div>
<div class="t" style="left:387.00px;top:295px;font-size:6.40px;line-height:6.40px;color:#1c1cf2;white-space:pre;font-family:'Liberation Sans',sans-serif;transform:scaleX(0.945);transform-origin:0 0;">0+324.13</div>
<div class="t" style="left:421.60px;top:295px;font-size:6.40px;line-height:6.40px;color:#1c1cf2;white-space:pre;font-family:'Liberation Sans',sans-serif;">1</div>
<div class="t" style="left:446.30px;top:295px;font-size:6.40px;line-height:6.40px;color:#1c1cf2;white-space:pre;font-family:'Liberation Sans',sans-serif;transform:scaleX(0.917);transform-origin:0 0;">* Σημείο *</div>
<svg style="left:354.60px;top:301.80px;" width="7.7" height="7.7" viewBox="0 0 7.7 7.7"><circle cx="3.85" cy="3.85" r="3.70" fill="#b2b2b2"/><circle cx="3.55" cy="3.55" r="2.75" fill="#d4d4d4"/><rect x="3.05" y="0.95" width="1.6" height="3.7" fill="#e8181a"/><rect x="3.05" y="5.25" width="1.6" height="1.3" fill="#e8181a"/></svg>
<div class="t" style="left:363.60px;top:304px;font-size:6.40px;line-height:6.40px;color:#1c1cf2;white-space:pre;font-family:'Liberation Sans',sans-serif;">15</div>
<div class="t" style="left:387.00px;top:304px;font-size:6.40px;line-height:6.40px;color:#1c1cf2;white-space:pre;font-family:'Liberation Sans',sans-serif;transform:scaleX(0.945);transform-origin:0 0;">0+344.13</div>
<div class="t" style="left:421.60px;top:304px;font-size:6.40px;line-height:6.40px;color:#1c1cf2;white-space:pre;font-family:'Liberation Sans',sans-serif;">1</div>
<div class="t" style="left:446.30px;top:304px;font-size:6.40px;line-height:6.40px;color:#1c1cf2;white-space:pre;font-family:'Liberation Sans',sans-serif;transform:scaleX(0.917);transform-origin:0 0;">* Σημείο *</div>
<svg style="left:354.60px;top:310.85px;" width="7.7" height="7.7" viewBox="0 0 7.7 7.7"><circle cx="3.85" cy="3.85" r="3.70" fill="#b2b2b2"/><circle cx="3.55" cy="3.55" r="2.75" fill="#d4d4d4"/><rect x="3.05" y="0.95" width="1.6" height="3.7" fill="#e8181a"/><rect x="3.05" y="5.25" width="1.6" height="1.3" fill="#e8181a"/></svg>
<div class="t" style="left:363.60px;top:313px;font-size:6.40px;line-height:6.40px;color:#1c1cf2;white-space:pre;font-family:'Liberation Sans',sans-serif;">A'2</div>
<div class="t" style="left:387.00px;top:313px;font-size:6.40px;line-height:6.40px;color:#1c1cf2;white-space:pre;font-family:'Liberation Sans',sans-serif;transform:scaleX(0.945);transform-origin:0 0;">0+364.13</div>
<div class="t" style="left:421.60px;top:313px;font-size:6.40px;line-height:6.40px;color:#1c1cf2;white-space:pre;font-family:'Liberation Sans',sans-serif;">1</div>
<div class="t" style="left:446.30px;top:313px;font-size:6.40px;line-height:6.40px;color:#1c1cf2;white-space:pre;font-family:'Liberation Sans',sans-serif;transform:scaleX(0.917);transform-origin:0 0;">* Σημείο *</div>
<svg style="left:354.60px;top:319.90px;" width="7.7" height="7.7" viewBox="0 0 7.7 7.7"><circle cx="3.85" cy="3.85" r="3.70" fill="#b2b2b2"/><circle cx="3.55" cy="3.55" r="2.75" fill="#d4d4d4"/><rect x="3.05" y="0.95" width="1.6" height="3.7" fill="#e8181a"/><rect x="3.05" y="5.25" width="1.6" height="1.3" fill="#e8181a"/></svg>
<div class="t" style="left:363.60px;top:322px;font-size:6.40px;line-height:6.40px;color:#1c1cf2;white-space:pre;font-family:'Liberation Sans',sans-serif;">A3</div>
<div class="t" style="left:387.00px;top:322px;font-size:6.40px;line-height:6.40px;color:#1c1cf2;white-space:pre;font-family:'Liberation Sans',sans-serif;transform:scaleX(0.945);transform-origin:0 0;">0+375.22</div>
<div class="t" style="left:421.60px;top:322px;font-size:6.40px;line-height:6.40px;color:#1c1cf2;white-space:pre;font-family:'Liberation Sans',sans-serif;">1</div>
<div class="t" style="left:446.30px;top:322px;font-size:6.40px;line-height:6.40px;color:#1c1cf2;white-space:pre;font-family:'Liberation Sans',sans-serif;transform:scaleX(0.917);transform-origin:0 0;">* Σημείο *</div>
<svg style="left:354.60px;top:328.95px;" width="7.7" height="7.7" viewBox="0 0 7.7 7.7"><circle cx="3.85" cy="3.85" r="3.70" fill="#b2b2b2"/><circle cx="3.55" cy="3.55" r="2.75" fill="#d4d4d4"/><rect x="3.05" y="0.95" width="1.6" height="3.7" fill="#e8181a"/><rect x="3.05" y="5.25" width="1.6" height="1.3" fill="#e8181a"/></svg>
<div class="t" style="left:363.60px;top:331px;font-size:6.40px;line-height:6.40px;color:#1c1cf2;white-space:pre;font-family:'Liberation Sans',sans-serif;">16</div>
<div class="t" style="left:387.00px;top:331px;font-size:6.40px;line-height:6.40px;color:#1c1cf2;white-space:pre;font-family:'Liberation Sans',sans-serif;transform:scaleX(0.945);transform-origin:0 0;">0+395.22</div>
<div class="t" style="left:421.60px;top:331px;font-size:6.40px;line-height:6.40px;color:#1c1cf2;white-space:pre;font-family:'Liberation Sans',sans-serif;">1</div>
<div class="t" style="left:446.30px;top:331px;font-size:6.40px;line-height:6.40px;color:#1c1cf2;white-space:pre;font-family:'Liberation Sans',sans-serif;transform:scaleX(0.917);transform-origin:0 0;">* Σημείο *</div>
<svg style="left:354.60px;top:338.00px;" width="7.7" height="7.7" viewBox="0 0 7.7 7.7"><circle cx="3.85" cy="3.85" r="3.70" fill="#b2b2b2"/><circle cx="3.55" cy="3.55" r="2.75" fill="#d4d4d4"/><rect x="3.05" y="0.95" width="1.6" height="3.7" fill="#e8181a"/><rect x="3.05" y="5.25" width="1.6" height="1.3" fill="#e8181a"/></svg>
<div class="t" style="left:363.60px;top:340px;font-size:6.40px;line-height:6.40px;color:#1c1cf2;white-space:pre;font-family:'Liberation Sans',sans-serif;">17</div>
<div class="t" style="left:387.00px;top:340px;font-size:6.40px;line-height:6.40px;color:#1c1cf2;white-space:pre;font-family:'Liberation Sans',sans-serif;transform:scaleX(0.945);transform-origin:0 0;">0+415.22</div>
<div class="t" style="left:421.60px;top:340px;font-size:6.40px;line-height:6.40px;color:#1c1cf2;white-space:pre;font-family:'Liberation Sans',sans-serif;">1</div>
<div class="t" style="left:446.30px;top:340px;font-size:6.40px;line-height:6.40px;color:#1c1cf2;white-space:pre;font-family:'Liberation Sans',sans-serif;transform:scaleX(0.917);transform-origin:0 0;">* Σημείο *</div>
<svg style="left:354.60px;top:347.05px;" width="7.7" height="7.7" viewBox="0 0 7.7 7.7"><circle cx="3.85" cy="3.85" r="3.70" fill="#b2b2b2"/><circle cx="3.55" cy="3.55" r="2.75" fill="#d4d4d4"/><rect x="3.05" y="0.95" width="1.6" height="3.7" fill="#e8181a"/><rect x="3.05" y="5.25" width="1.6" height="1.3" fill="#e8181a"/></svg>
<div class="t" style="left:363.60px;top:349px;font-size:6.40px;line-height:6.40px;color:#1c1cf2;white-space:pre;font-family:'Liberation Sans',sans-serif;">Ω3</div>
<div class="t" style="left:387.00px;top:349px;font-size:6.40px;line-height:6.40px;color:#1c1cf2;white-space:pre;font-family:'Liberation Sans',sans-serif;transform:scaleX(0.945);transform-origin:0 0;">0+425.22</div>
<div class="t" style="left:421.60px;top:349px;font-size:6.40px;line-height:6.40px;color:#1c1cf2;white-space:pre;font-family:'Liberation Sans',sans-serif;">1</div>
<div class="t" style="left:446.30px;top:349px;font-size:6.40px;line-height:6.40px;color:#1c1cf2;white-space:pre;font-family:'Liberation Sans',sans-serif;transform:scaleX(0.917);transform-origin:0 0;">* Σημείο *</div>
<svg style="left:354.60px;top:356.10px;" width="7.7" height="7.7" viewBox="0 0 7.7 7.7"><circle cx="3.85" cy="3.85" r="3.70" fill="#b2b2b2"/><circle cx="3.55" cy="3.55" r="2.75" fill="#d4d4d4"/><rect x="3.05" y="0.95" width="1.6" height="3.7" fill="#e8181a"/><rect x="3.05" y="5.25" width="1.6" height="1.3" fill="#e8181a"/></svg>
<div class="t" style="left:363.60px;top:359px;font-size:6.40px;line-height:6.40px;color:#1c1cf2;white-space:pre;font-family:'Liberation Sans',sans-serif;">18</div>
<div class="t" style="left:387.00px;top:359px;font-size:6.40px;line-height:6.40px;color:#1c1cf2;white-space:pre;font-family:'Liberation Sans',sans-serif;transform:scaleX(0.945);transform-origin:0 0;">0+445.22</div>
<div class="t" style="left:421.60px;top:359px;font-size:6.40px;line-height:6.40px;color:#1c1cf2;white-space:pre;font-family:'Liberation Sans',sans-serif;">1</div>
<div class="t" style="left:446.30px;top:359px;font-size:6.40px;line-height:6.40px;color:#1c1cf2;white-space:pre;font-family:'Liberation Sans',sans-serif;transform:scaleX(0.917);transform-origin:0 0;">* Σημείο *</div>
<svg style="left:354.60px;top:365.15px;" width="7.7" height="7.7" viewBox="0 0 7.7 7.7"><circle cx="3.85" cy="3.85" r="3.70" fill="#b2b2b2"/><circle cx="3.55" cy="3.55" r="2.75" fill="#d4d4d4"/><rect x="3.05" y="0.95" width="1.6" height="3.7" fill="#e8181a"/><rect x="3.05" y="5.25" width="1.6" height="1.3" fill="#e8181a"/></svg>
<div class="t" style="left:363.60px;top:368px;font-size:6.40px;line-height:6.40px;color:#1c1cf2;white-space:pre;font-family:'Liberation Sans',sans-serif;">19</div>
<div class="t" style="left:387.00px;top:368px;font-size:6.40px;line-height:6.40px;color:#1c1cf2;white-space:pre;font-family:'Liberation Sans',sans-serif;transform:scaleX(0.945);transform-origin:0 0;">0+465.22</div>
<div class="t" style="left:421.60px;top:368px;font-size:6.40px;line-height:6.40px;color:#1c1cf2;white-space:pre;font-family:'Liberation Sans',sans-serif;">1</div>
<div class="t" style="left:446.30px;top:368px;font-size:6.40px;line-height:6.40px;color:#1c1cf2;white-space:pre;font-family:'Liberation Sans',sans-serif;transform:scaleX(0.917);transform-origin:0 0;">* Σημείο *</div>
<svg style="left:354.60px;top:374.20px;" width="7.7" height="7.7" viewBox="0 0 7.7 7.7"><circle cx="3.85" cy="3.85" r="3.70" fill="#b2b2b2"/><circle cx="3.55" cy="3.55" r="2.75" fill="#d4d4d4"/><rect x="3.05" y="0.95" width="1.6" height="3.7" fill="#e8181a"/><rect x="3.05" y="5.25" width="1.6" height="1.3" fill="#e8181a"/></svg>
<div class="t" style="left:363.60px;top:377px;font-size:6.40px;line-height:6.40px;color:#1c1cf2;white-space:pre;font-family:'Liberation Sans',sans-serif;">20</div>
<div class="t" style="left:387.00px;top:377px;font-size:6.40px;line-height:6.40px;color:#1c1cf2;white-space:pre;font-family:'Liberation Sans',sans-serif;transform:scaleX(0.945);transform-origin:0 0;">0+485.22</div>
<div class="t" style="left:421.60px;top:377px;font-size:6.40px;line-height:6.40px;color:#1c1cf2;white-space:pre;font-family:'Liberation Sans',sans-serif;">1</div>
<div class="t" style="left:446.30px;top:377px;font-size:6.40px;line-height:6.40px;color:#1c1cf2;white-space:pre;font-family:'Liberation Sans',sans-serif;transform:scaleX(0.917);transform-origin:0 0;">* Σημείο *</div>
<svg style="left:354.60px;top:383.25px;" width="7.7" height="7.7" viewBox="0 0 7.7 7.7"><circle cx="3.85" cy="3.85" r="3.70" fill="#b2b2b2"/><circle cx="3.55" cy="3.55" r="2.75" fill="#d4d4d4"/><rect x="3.05" y="0.95" width="1.6" height="3.7" fill="#e8181a"/><rect x="3.05" y="5.25" width="1.6" height="1.3" fill="#e8181a"/></svg>
<div class="t" style="left:363.60px;top:386px;font-size:6.40px;line-height:6.40px;color:#1c1cf2;white-space:pre;font-family:'Liberation Sans',sans-serif;">Δ3</div>
<div class="t" style="left:387.00px;top:386px;font-size:6.40px;line-height:6.40px;color:#1c1cf2;white-space:pre;font-family:'Liberation Sans',sans-serif;transform:scaleX(0.945);transform-origin:0 0;">0+497.85</div>
<div class="t" style="left:421.60px;top:386px;font-size:6.40px;line-height:6.40px;color:#1c1cf2;white-space:pre;font-family:'Liberation Sans',sans-serif;">1</div>
<div class="t" style="left:446.30px;top:386px;font-size:6.40px;line-height:6.40px;color:#1c1cf2;white-space:pre;font-family:'Liberation Sans',sans-serif;transform:scaleX(0.917);transform-origin:0 0;">* Σημείο *</div>
<svg style="left:354.60px;top:392.30px;overflow:hidden;" width="7.7" height="1.7" viewBox="0 0 7.7 1.7"><circle cx="3.85" cy="3.85" r="3.65" fill="#d0d0d0"/></svg>
<div style="left:505.00px;top:116.00px;width:9.40px;height:277.40px;background:#f0f0f0;"></div>
<div style="left:505.80px;top:125.40px;width:7.30px;height:83.00px;background:#cdcdcd;"></div>
<svg style="left:507.00px;top:119.00px;" width="5.5" height="3.5" viewBox="0 0 5.5 3.5"><path d="M0.6 3 L2.75 1 L4.9 3" stroke="#505050" stroke-width="0.9" fill="none"/></svg>
<svg style="left:507.00px;top:387.00px;" width="5.5" height="3.5" viewBox="0 0 5.5 3.5"><path d="M0.6 0.6 L2.75 2.6 L4.9 0.6" stroke="#505050" stroke-width="0.9" fill="none"/></svg>
<div class="t" style="left:353.00px;top:401px;font-size:6.40px;line-height:6.40px;color:#1c1c22;white-space:pre;font-family:'Liberation Sans',sans-serif;transform:scaleX(0.875);transform-origin:0 0;">Επιλογή διατομών</div>
<div style="left:349.30px;top:403.00px;width:1.00px;height:86.00px;background:#e0e0e0;"></div>
<div style="left:520.40px;top:403.00px;width:1.00px;height:86.00px;background:#e0e0e0;"></div>
<div style="left:349.30px;top:488.00px;width:172.10px;height:1.00px;background:#e0e0e0;"></div>
<div style="left:349.30px;top:403.00px;width:1.70px;height:1.00px;background:#e0e0e0;"></div>
<div style="left:400.00px;top:403.00px;width:121.40px;height:1.00px;background:#e0e0e0;"></div>
<div style="left:360.00px;top:404.60px;width:1.00px;height:19.50px;background:#e2e2e2;"></div>
<div style="left:513.40px;top:404.60px;width:1.00px;height:19.50px;background:#e2e2e2;"></div>
<div style="left:360.00px;top:423.10px;width:154.40px;height:1.00px;background:#e2e2e2;"></div>
<div style="left:360.00px;top:404.60px;width:154.40px;height:1.00px;background:#e2e2e2;"></div>
<svg style="left:358.00px;top:413.00px;" width="8.3" height="8.3" viewBox="0 0 8.3 8.3"><rect x="0.45" y="0.45" width="5.90" height="5.90" fill="#fff" stroke="#5c5c5c" stroke-width="0.9"/></svg>
<div class="t" style="left:366.00px;top:415px;font-size:6.40px;line-height:6.40px;color:#1c1c22;white-space:pre;font-family:'Liberation Sans',sans-serif;transform:scaleX(0.867);transform-origin:0 0;">Χ.Θ.</div>
<div class="t" style="left:404.00px;top:415px;font-size:6.40px;line-height:6.40px;color:#a8a8a8;white-space:pre;font-family:'Liberation Sans',sans-serif;transform:scaleX(0.854);transform-origin:0 0;">από :</div>
<div style="left:419.80px;top:410.80px;width:31.20px;height:10.50px;background:#ffffff;border:1px solid #d6d6d6;"></div>
<div class="t" style="left:421.30px;top:415px;font-size:6.40px;line-height:6.40px;color:#888;white-space:pre;font-family:'Liberation Sans',sans-serif;transform:scaleX(0.949);transform-origin:0 0;">0.000</div>
<div class="t" style="left:460.60px;top:415px;font-size:6.40px;line-height:6.40px;color:#a8a8a8;white-space:pre;font-family:'Liberation Sans',sans-serif;transform:scaleX(0.950);transform-origin:0 0;">μέχρι :</div>
<div style="left:480.00px;top:410.80px;width:31.60px;height:10.50px;background:#ffffff;border:1px solid #d6d6d6;"></div>
<div class="t" style="left:481.50px;top:415px;font-size:6.40px;line-height:6.40px;color:#6a6a6a;white-space:pre;font-family:'Liberation Sans',sans-serif;transform:scaleX(1.030);transform-origin:0 0;">1479.491</div>
<div style="left:360.00px;top:424.10px;width:1.00px;height:20.40px;background:#e2e2e2;"></div>
<div style="left:513.40px;top:424.10px;width:1.00px;height:20.40px;background:#e2e2e2;"></div>
<div style="left:360.00px;top:443.50px;width:154.40px;height:1.00px;background:#e2e2e2;"></div>
<div style="left:360.00px;top:424.10px;width:154.40px;height:1.00px;background:#e2e2e2;"></div>
<svg style="left:358.00px;top:433.00px;" width="8.3" height="8.3" viewBox="0 0 8.3 8.3"><rect x="0.45" y="0.45" width="5.90" height="5.90" fill="#fff" stroke="#5c5c5c" stroke-width="0.9"/></svg>
<div class="t" style="left:366.00px;top:435px;font-size:6.40px;line-height:6.40px;color:#1c1c22;white-space:pre;font-family:'Liberation Sans',sans-serif;transform:scaleX(0.924);transform-origin:0 0;">Τυπ. Διατομή</div>
<div style="left:419.80px;top:430.60px;width:91.80px;height:11.10px;background:#d5d5d5;border:1px solid #d5d5d5;"></div>
<svg style="left:503.60px;top:434.15px;" width="5" height="4" viewBox="0 0 5 4"><path d="M0.6 1 L2.5 3 L4.4 1" stroke="#b8b8b8" stroke-width="0.8" fill="none"/></svg>
<div class="t" style="left:421.80px;top:435px;font-size:6.40px;line-height:6.40px;color:#8e8e8e;white-space:pre;font-family:'Liberation Sans',sans-serif;transform:scaleX(0.890);transform-origin:0 0;">Νέα ΔΖΗ - 3 Στρώσεις</div>
<div style="left:360.00px;top:444.50px;width:1.00px;height:19.50px;background:#e2e2e2;"></div>
<div style="left:513.40px;top:444.50px;width:1.00px;height:19.50px;background:#e2e2e2;"></div>
<div style="left:360.00px;top:463.00px;width:154.40px;height:1.00px;background:#e2e2e2;"></div>
<div style="left:360.00px;top:444.50px;width:154.40px;height:1.00px;background:#e2e2e2;"></div>
<svg style="left:358.00px;top:453.40px;" width="8.3" height="8.3" viewBox="0 0 8.3 8.3"><rect x="0.45" y="0.45" width="5.90" height="5.90" fill="#fff" stroke="#5c5c5c" stroke-width="0.9"/></svg>
<div class="t" style="left:366.00px;top:456px;font-size:6.40px;line-height:6.40px;color:#1c1c22;white-space:pre;font-family:'Liberation Sans',sans-serif;transform:scaleX(0.867);transform-origin:0 0;">Κλάδοι</div>
<svg style="left:414.90px;top:453.30px;" width="7" height="7" viewBox="0 0 7 7"><circle cx="3.5" cy="3.5" r="2.95" fill="#fff" stroke="#c6c6c6" stroke-width="0.8"/><circle cx="3.5" cy="3.5" r="1.6" fill="#bcbcbc"/></svg>
<div class="t" style="left:422.60px;top:456px;font-size:6.40px;line-height:6.40px;color:#a8a8a8;white-space:pre;font-family:'Liberation Sans',sans-serif;transform:scaleX(0.952);transform-origin:0 0;">ενός κλάδου</div>
<svg style="left:466.50px;top:453.30px;" width="7" height="7" viewBox="0 0 7 7"><circle cx="3.5" cy="3.5" r="2.95" fill="#fff" stroke="#c6c6c6" stroke-width="0.8"/></svg>
<div class="t" style="left:474.50px;top:456px;font-size:6.40px;line-height:6.40px;color:#a8a8a8;white-space:pre;font-family:'Liberation Sans',sans-serif;transform:scaleX(0.922);transform-origin:0 0;">δύο κλάδων</div>
<div style="left:360.00px;top:466.40px;width:1.00px;height:18.90px;background:#e2e2e2;"></div>
<div style="left:432.30px;top:466.40px;width:1.00px;height:18.90px;background:#e2e2e2;"></div>
<div style="left:360.00px;top:484.30px;width:73.30px;height:1.00px;background:#e2e2e2;"></div>
<div style="left:360.00px;top:466.40px;width:73.30px;height:1.00px;background:#e2e2e2;"></div>
<svg style="left:358.00px;top:473.80px;" width="8.3" height="8.3" viewBox="0 0 8.3 8.3"><rect x="0.45" y="0.45" width="5.90" height="5.90" fill="#fff" stroke="#5c5c5c" stroke-width="0.9"/></svg>
<svg style="left:387.10px;top:473.70px;" width="7" height="7" viewBox="0 0 7 7"><circle cx="3.5" cy="3.5" r="2.95" fill="#fff" stroke="#c6c6c6" stroke-width="0.8"/><circle cx="3.5" cy="3.5" r="1.6" fill="#bcbcbc"/></svg>
<svg style="left:395.70px;top:473.50px;" width="7.4" height="7.4" viewBox="0 0 7.4 7.4"><circle cx="3.7" cy="3.7" r="3.5" fill="#d4d4d4"/><path d="M1.8 3.8 L3.2 5.2 L5.8 2.2" stroke="#9a9a9a" stroke-width="1" fill="none"/></svg>
<svg style="left:411.20px;top:473.70px;" width="7" height="7" viewBox="0 0 7 7"><circle cx="3.5" cy="3.5" r="2.95" fill="#fff" stroke="#c6c6c6" stroke-width="0.8"/></svg>
<svg style="left:420.70px;top:473.50px;" width="7.4" height="7.4" viewBox="0 0 7.4 7.4"><circle cx="3.7" cy="3.7" r="3.5" fill="#d4d4d4"/><rect x="3.1" y="1.2" width="1.2" height="3.4" fill="#a8a8a8"/><rect x="3.1" y="5.3" width="1.2" height="1.1" fill="#a8a8a8"/></svg>
<div style="left:435.90px;top:472.40px;width:35.80px;height:10.20px;background:#e1e1e1;border:1px solid #bdbdbd;"></div>
<div class="t" style="left:443.50px;top:476px;font-size:6.40px;line-height:6.40px;color:#1c1c22;white-space:pre;font-family:'Liberation Sans',sans-serif;transform:scaleX(0.893);transform-origin:0 0;">Επιλογή</div>
<div style="left:474.50px;top:472.40px;width:42.10px;height:10.20px;background:#e1e1e1;border:1px solid #bdbdbd;"></div>
<div class="t" style="left:479.50px;top:476px;font-size:6.40px;line-height:6.40px;color:#1c1c22;white-space:pre;font-family:'Liberation Sans',sans-serif;transform:scaleX(0.934);transform-origin:0 0;">Αποεπιλογή</div>
<div class="t" style="left:528.30px;top:107px;font-size:6.40px;line-height:6.40px;color:#1c1c22;white-space:pre;font-family:'Liberation Sans',sans-serif;transform:scaleX(0.885);transform-origin:0 0;">Υπολογισμός επιλεγμένων διατομών</div>
<div style="left:525.20px;top:108.60px;width:1.00px;height:295.60px;background:#e0e0e0;"></div>
<div style="left:663.60px;top:108.60px;width:1.00px;height:295.60px;background:#e0e0e0;"></div>
<div style="left:525.20px;top:403.20px;width:139.40px;height:1.00px;background:#e0e0e0;"></div>
<div style="left:525.20px;top:108.60px;width:1.80px;height:1.00px;background:#e0e0e0;"></div>
<div style="left:621.50px;top:108.60px;width:43.10px;height:1.00px;background:#e0e0e0;"></div>
<svg style="left:534.60px;top:116.50px;" width="7" height="7" viewBox="0 0 7 7"><circle cx="3.5" cy="3.5" r="2.95" fill="#fff" stroke="#333333" stroke-width="0.8"/><circle cx="3.5" cy="3.5" r="1.6" fill="#222"/></svg>
<div class="t" style="left:542.80px;top:119px;font-size:6.40px;line-height:6.40px;color:#1c1c22;white-space:pre;font-family:'Liberation Sans',sans-serif;transform:scaleX(0.902);transform-origin:0 0;">με τυπική διατομή</div>
<div style="left:545.10px;top:124.70px;width:90.20px;height:11.00px;background:#e4e4e4;border:1px solid #cfcfcf;"></div>
<svg style="left:627.30px;top:128.20px;" width="5" height="4" viewBox="0 0 5 4"><path d="M0.6 1 L2.5 3 L4.4 1" stroke="#6a6a6a" stroke-width="0.8" fill="none"/></svg>
<div class="t" style="left:547.50px;top:129px;font-size:6.40px;line-height:6.40px;color:#1c1c22;white-space:pre;font-family:'Liberation Sans',sans-serif;transform:scaleX(0.878);transform-origin:0 0;">ΑΡΤΗΡΙΑ ΤΔ2</div>
<svg style="left:534.60px;top:137.50px;" width="7" height="7" viewBox="0 0 7 7"><circle cx="3.5" cy="3.5" r="2.95" fill="#fff" stroke="#333333" stroke-width="0.8"/></svg>
<div class="t" style="left:542.80px;top:140px;font-size:6.40px;line-height:6.40px;color:#1c1c22;white-space:pre;font-family:'Liberation Sans',sans-serif;transform:scaleX(0.895);transform-origin:0 0;">με σημεία</div>
<svg style="left:534.60px;top:147.90px;" width="7" height="7" viewBox="0 0 7 7"><circle cx="3.5" cy="3.5" r="2.95" fill="#fff" stroke="#2a7ad8" stroke-width="0.8"/></svg>
<div class="t" style="left:542.80px;top:150px;font-size:6.40px;line-height:6.40px;color:#1c1c22;white-space:pre;font-family:'Liberation Sans',sans-serif;transform:scaleX(0.925);transform-origin:0 0;">ως έχουν</div>
<div style="left:525.50px;top:158.00px;width:126.30px;height:0.90px;background:#dadada;"></div>
<div style="left:528.00px;top:173.30px;width:136.20px;height:222.10px;background:#ffffff;border:1px solid #dadada;"></div>
<div style="left:528.00px;top:163.40px;width:23.90px;height:10.90px;background:#ffffff;border:1px solid #e0e0e0;border-bottom:none;"></div>
<div class="t" style="left:531.00px;top:167px;font-size:6.40px;line-height:6.40px;color:#1c1c22;white-space:pre;font-family:'Liberation Sans',sans-serif;transform:scaleX(0.918);transform-origin:0 0;">Κλάδοι</div>
<div style="left:551.90px;top:164.20px;width:46.40px;height:9.10px;background:#f0f0f0;border:1px solid #e0e0e0;"></div>
<div class="t" style="left:554.80px;top:168px;font-size:6.40px;line-height:6.40px;color:#1c1c22;white-space:pre;font-family:'Liberation Sans',sans-serif;transform:scaleX(0.896);transform-origin:0 0;">Οδοστρ.-Πρανή</div>
<div style="left:598.30px;top:164.20px;width:23.00px;height:9.10px;background:#f0f0f0;border:1px solid #e0e0e0;"></div>
<div class="t" style="left:602.00px;top:168px;font-size:6.40px;line-height:6.40px;color:#1c1c22;white-space:pre;font-family:'Liberation Sans',sans-serif;transform:scaleX(0.893);transform-origin:0 0;">Φυτικά</div>
<svg style="left:533.70px;top:183.00px;" width="7" height="7" viewBox="0 0 7 7"><circle cx="3.5" cy="3.5" r="2.95" fill="#fff" stroke="#333333" stroke-width="0.8"/><circle cx="3.5" cy="3.5" r="1.6" fill="#222"/></svg>
<div class="t" style="left:542.00px;top:185px;font-size:6.40px;line-height:6.40px;color:#1c1c22;white-space:pre;font-family:'Liberation Sans',sans-serif;transform:scaleX(0.890);transform-origin:0 0;">με προεπιλογές Τυπ. Διατομής</div>
<svg style="left:533.70px;top:194.00px;" width="7" height="7" viewBox="0 0 7 7"><circle cx="3.5" cy="3.5" r="2.95" fill="#fff" stroke="#333333" stroke-width="0.8"/></svg>
<div class="t" style="left:542.00px;top:196px;font-size:6.40px;line-height:6.40px;color:#1c1c22;white-space:pre;font-family:'Liberation Sans',sans-serif;transform:scaleX(0.906);transform-origin:0 0;">ως έχουν</div>
<div style="left:532.00px;top:204.80px;width:1.00px;height:188.00px;background:#e0e0e0;"></div>
<div style="left:660.00px;top:204.80px;width:1.00px;height:188.00px;background:#e0e0e0;"></div>
<div style="left:532.00px;top:391.80px;width:129.00px;height:1.00px;background:#e0e0e0;"></div>
<div style="left:532.00px;top:204.80px;width:0.00px;height:1.00px;background:#e0e0e0;"></div>
<div style="left:641.20px;top:204.80px;width:19.80px;height:1.00px;background:#e0e0e0;"></div>
<svg style="left:533.70px;top:204.50px;" width="7" height="7" viewBox="0 0 7 7"><circle cx="3.5" cy="3.5" r="2.95" fill="#fff" stroke="#333333" stroke-width="0.8"/></svg>
<div class="t" style="left:542.00px;top:207px;font-size:6.40px;line-height:6.40px;color:#1c1c22;white-space:pre;font-family:'Liberation Sans',sans-serif;transform:scaleX(0.896);transform-origin:0 0;">με συγκεκριμένη διαμόρφωση</div>
<div style="left:536.10px;top:214.30px;width:1.00px;height:32.60px;background:#e0e0e0;"></div>
<div style="left:656.60px;top:214.30px;width:1.00px;height:32.60px;background:#e0e0e0;"></div>
<div style="left:536.10px;top:245.90px;width:121.50px;height:1.00px;background:#e0e0e0;"></div>
<div style="left:536.10px;top:214.30px;width:0.40px;height:1.00px;background:#e0e0e0;"></div>
<div style="left:582.50px;top:214.30px;width:75.10px;height:1.00px;background:#e0e0e0;"></div>
<svg style="left:539.60px;top:214.20px;" width="7" height="7" viewBox="0 0 7 7"><circle cx="3.5" cy="3.5" r="2.95" fill="#fff" stroke="#c6c6c6" stroke-width="0.8"/></svg>
<div class="t" style="left:547.80px;top:216px;font-size:6.40px;line-height:6.40px;color:#a8a8a8;white-space:pre;font-family:'Liberation Sans',sans-serif;transform:scaleX(0.919);transform-origin:0 0;">Ένας κλάδος</div>
<div class="t" style="left:541.70px;top:226px;font-size:6.40px;line-height:6.40px;color:#a8a8a8;white-space:pre;font-family:'Liberation Sans',sans-serif;transform:scaleX(0.895);transform-origin:0 0;">Υψ. Καταστρώματος</div>
<div style="left:541.70px;top:232.50px;width:26.80px;height:10.60px;background:#ffffff;border:1px solid #d6d6d6;"></div>
<div class="t" style="left:543.20px;top:236px;font-size:6.40px;line-height:6.40px;color:#888;white-space:pre;font-family:'Liberation Sans',sans-serif;transform:scaleX(0.987);transform-origin:0 0;">0.000</div>
<svg style="left:572.00px;top:234.60px;" width="8.3" height="8.3" viewBox="0 0 8.3 8.3"><rect x="0.45" y="0.45" width="5.90" height="5.90" fill="#fff" stroke="#cdcdcd" stroke-width="0.9"/><path d="M1.36 3.4 L2.856 4.896 L5.576 1.7" stroke="#b8b8b8" stroke-width="0.9" fill="none"/></svg>
<div class="t" style="left:580.60px;top:237px;font-size:6.40px;line-height:6.40px;color:#555555;white-space:pre;font-family:'Liberation Sans',sans-serif;transform:scaleX(0.887);transform-origin:0 0;">από Μηκοτομή</div>
<div style="left:536.50px;top:252.70px;width:1.00px;height:114.90px;background:#e0e0e0;"></div>
<div style="left:656.70px;top:252.70px;width:1.00px;height:114.90px;background:#e0e0e0;"></div>
<div style="left:536.50px;top:366.60px;width:121.20px;height:1.00px;background:#e0e0e0;"></div>
<div style="left:536.50px;top:252.70px;width:0.50px;height:1.00px;background:#e0e0e0;"></div>
<div style="left:621.00px;top:252.70px;width:36.70px;height:1.00px;background:#e0e0e0;"></div>
<svg style="left:540.00px;top:252.00px;" width="7" height="7" viewBox="0 0 7 7"><circle cx="3.5" cy="3.5" r="2.95" fill="#fff" stroke="#c6c6c6" stroke-width="0.8"/><circle cx="3.5" cy="3.5" r="1.6" fill="#bcbcbc"/></svg>
<div class="t" style="left:547.50px;top:254px;font-size:6.40px;line-height:6.40px;color:#a8a8a8;white-space:pre;font-family:'Liberation Sans',sans-serif;transform:scaleX(0.929);transform-origin:0 0;">Δύο κλάδοι</div>
<div class="t" style="left:540.30px;top:262px;font-size:6.40px;line-height:6.40px;color:#a8a8a8;white-space:pre;font-family:'Liberation Sans',sans-serif;transform:scaleX(0.905);transform-origin:0 0;">Αριστερός κλάδος</div>
<div class="t" style="left:541.70px;top:271px;font-size:6.40px;line-height:6.40px;color:#a8a8a8;white-space:pre;font-family:'Liberation Sans',sans-serif;transform:scaleX(0.895);transform-origin:0 0;">Υψ. Καταστρώματος</div>
<div style="left:541.70px;top:278.00px;width:26.80px;height:10.40px;background:#ffffff;border:1px solid #d6d6d6;"></div>
<div class="t" style="left:543.20px;top:282px;font-size:6.40px;line-height:6.40px;color:#888;white-space:pre;font-family:'Liberation Sans',sans-serif;transform:scaleX(0.987);transform-origin:0 0;">0.000</div>
<svg style="left:572.00px;top:280.40px;" width="8.3" height="8.3" viewBox="0 0 8.3 8.3"><rect x="0.45" y="0.45" width="5.90" height="5.90" fill="#fff" stroke="#cdcdcd" stroke-width="0.9"/><path d="M1.36 3.4 L2.856 4.896 L5.576 1.7" stroke="#b8b8b8" stroke-width="0.9" fill="none"/></svg>
<div class="t" style="left:580.60px;top:282px;font-size:6.40px;line-height:6.40px;color:#555555;white-space:pre;font-family:'Liberation Sans',sans-serif;transform:scaleX(0.887);transform-origin:0 0;">από Μηκοτομή</div>
<div class="t" style="left:541.70px;top:294px;font-size:6.40px;line-height:6.40px;color:#a8a8a8;white-space:pre;font-family:'Liberation Sans',sans-serif;transform:scaleX(0.936);transform-origin:0 0;">Δχ Άξονα</div>
<div style="left:541.70px;top:299.30px;width:26.80px;height:10.10px;background:#ffffff;border:1px solid #d6d6d6;"></div>
<div class="t" style="left:543.20px;top:303px;font-size:6.40px;line-height:6.40px;color:#888;white-space:pre;font-family:'Liberation Sans',sans-serif;transform:scaleX(0.987);transform-origin:0 0;">0.000</div>
<svg style="left:572.00px;top:301.10px;" width="8.3" height="8.3" viewBox="0 0 8.3 8.3"><rect x="0.45" y="0.45" width="5.90" height="5.90" fill="#fff" stroke="#cdcdcd" stroke-width="0.9"/><path d="M1.36 3.4 L2.856 4.896 L5.576 1.7" stroke="#b8b8b8" stroke-width="0.9" fill="none"/></svg>
<div class="t" style="left:580.60px;top:303px;font-size:6.40px;line-height:6.40px;color:#555555;white-space:pre;font-family:'Liberation Sans',sans-serif;transform:scaleX(0.870);transform-origin:0 0;">από Διάγραμμα</div>
<div class="t" style="left:540.30px;top:317px;font-size:6.40px;line-height:6.40px;color:#a8a8a8;white-space:pre;font-family:'Liberation Sans',sans-serif;transform:scaleX(0.954);transform-origin:0 0;">Δεξιός κλάδος</div>
<div class="t" style="left:541.70px;top:326px;font-size:6.40px;line-height:6.40px;color:#a8a8a8;white-space:pre;font-family:'Liberation Sans',sans-serif;transform:scaleX(0.895);transform-origin:0 0;">Υψ. Καταστρώματος</div>
<div style="left:541.70px;top:332.20px;width:26.80px;height:10.40px;background:#ffffff;border:1px solid #d6d6d6;"></div>
<div class="t" style="left:543.20px;top:336px;font-size:6.40px;line-height:6.40px;color:#888;white-space:pre;font-family:'Liberation Sans',sans-serif;transform:scaleX(0.987);transform-origin:0 0;">0.000</div>
<svg style="left:572.00px;top:334.00px;" width="8.3" height="8.3" viewBox="0 0 8.3 8.3"><rect x="0.45" y="0.45" width="5.90" height="5.90" fill="#fff" stroke="#cdcdcd" stroke-width="0.9"/><path d="M1.36 3.4 L2.856 4.896 L5.576 1.7" stroke="#b8b8b8" stroke-width="0.9" fill="none"/></svg>
<div class="t" style="left:580.60px;top:336px;font-size:6.40px;line-height:6.40px;color:#555555;white-space:pre;font-family:'Liberation Sans',sans-serif;transform:scaleX(0.887);transform-origin:0 0;">από Μηκοτομή</div>
<div class="t" style="left:541.70px;top:347px;font-size:6.40px;line-height:6.40px;color:#a8a8a8;white-space:pre;font-family:'Liberation Sans',sans-serif;transform:scaleX(0.936);transform-origin:0 0;">Δχ Άξονα</div>
<div style="left:541.70px;top:353.20px;width:26.80px;height:10.10px;background:#ffffff;border:1px solid #d6d6d6;"></div>
<div class="t" style="left:543.20px;top:357px;font-size:6.40px;line-height:6.40px;color:#888;white-space:pre;font-family:'Liberation Sans',sans-serif;transform:scaleX(0.987);transform-origin:0 0;">0.000</div>
<svg style="left:572.00px;top:355.00px;" width="8.3" height="8.3" viewBox="0 0 8.3 8.3"><rect x="0.45" y="0.45" width="5.90" height="5.90" fill="#fff" stroke="#cdcdcd" stroke-width="0.9"/><path d="M1.36 3.4 L2.856 4.896 L5.576 1.7" stroke="#b8b8b8" stroke-width="0.9" fill="none"/></svg>
<div class="t" style="left:580.60px;top:357px;font-size:6.40px;line-height:6.40px;color:#555555;white-space:pre;font-family:'Liberation Sans',sans-serif;transform:scaleX(0.870);transform-origin:0 0;">από Διάγραμμα</div>
<div style="left:560.00px;top:479.40px;width:42.70px;height:11.90px;background:#e3e3e3;border:1px solid #1a78d4;"></div>
<div class="t" style="left:566.00px;top:484px;font-size:6.40px;line-height:6.40px;color:#1c1c22;white-space:pre;font-family:'Liberation Sans',sans-serif;transform:scaleX(0.825);transform-origin:0 0;">Υπολογισμός</div>
<div style="left:561.00px;top:480.40px;width:40.70px;height:9.90px;border:1px solid #6aa6e6;"></div>
<div style="left:607.70px;top:479.40px;width:41.90px;height:11.90px;background:#e1e1e1;border:1px solid #bdbdbd;"></div>
<div class="t" style="left:618.50px;top:484px;font-size:6.40px;line-height:6.40px;color:#1c1c22;white-space:pre;font-family:'Liberation Sans',sans-serif;transform:scaleX(0.978);transform-origin:0 0;">Έξοδος</div>
<svg style="left:248.00px;top:65.00px;" width="10" height="9" viewBox="0 0 10 9"><path d="M2 7.3 L8.4 1.3" stroke="#333" stroke-width="0.8"/><circle cx="2" cy="7.3" r="1.1" fill="#1a9a1a"/><circle cx="8.4" cy="1.3" r="1.1" fill="#1a9a1a"/></svg>
<svg style="left:248.00px;top:77.50px;" width="10" height="9" viewBox="0 0 10 9"><path d="M2 7.2 L7.5 1.3" stroke="#333" stroke-width="0.8"/><circle cx="2" cy="7.2" r="1.1" fill="#1a9a1a"/><circle cx="7.5" cy="1.3" r="1.1" fill="#1a9a1a"/><text x="4.2" y="8.2" font-family="Liberation Sans" font-weight="bold" font-size="3.6" fill="#222">2x</text></svg>
<svg style="left:249.50px;top:91.30px;" width="7" height="7.5" viewBox="0 0 7 7.5"><path d="M0.8 0.5 V7" stroke="#e0502a" stroke-width="1.1"/><path d="M0.8 0.8 H6.2 V4.2 H4.6 V2.8 H3.6 V4.2 H0.8 Z" fill="#ea4a1e"/></svg>
<svg style="left:249.50px;top:105.00px;" width="7.5" height="7.5" viewBox="0 0 7.5 7.5"><path d="M0.5 0.8 H4.5 L7 3.5 L4.8 7 L1.5 6.6 L2.8 3.8 Z" fill="#94d4ea" stroke="#6ab0d0" stroke-width="0.6"/></svg>
<svg style="left:249.50px;top:118.00px;" width="7" height="7.5" viewBox="0 0 7 7.5"><rect x="0.4" y="0.4" width="6.2" height="6.7" fill="#c4d8f0" stroke="#7aa0d0" stroke-width="0.7"/><rect x="2" y="2" width="3.2" height="3.4" fill="#f0b030"/></svg>
<svg style="left:248.00px;top:132.50px;" width="10" height="8" viewBox="0 0 10 8"><path d="M0.8 1.5 C2.5 0.8 4 0.6 5 1.4" stroke="#555" stroke-width="1"/><path d="M5 1.4 L9 6.5" stroke="#e01818" stroke-width="1.3"/></svg>
<svg style="left:248.00px;top:144.50px;" width="10" height="9" viewBox="0 0 10 9"><path d="M1 1.2 L8.5 8" stroke="#333" stroke-width="0.9"/><path d="M1.5 2.2 L3.8 4 M5 5.3 L8.2 8.2" stroke="#ee1a1a" stroke-width="1.3"/></svg>
<svg style="left:248.50px;top:158.00px;" width="8" height="8.5" viewBox="0 0 8 8.5"><path d="M4 0.5 V6" stroke="#5a9ab0" stroke-width="1.3"/><path d="M0.5 7.2 H7.5" stroke="#4a8aa4" stroke-width="1.4"/><path d="M2.5 6.3 H5.5" stroke="#7ab8cc" stroke-width="1"/></svg>
<svg style="left:250.50px;top:171.80px;" width="4.5" height="8.5" viewBox="0 0 4.5 8.5"><path d="M1.2 0.5 V8" stroke="#4a90b0" stroke-width="1.3"/><path d="M1.2 0.9 H4 M1.2 4 H3.4" stroke="#4a90b0" stroke-width="1.1"/></svg>
<div style="left:246.20px;top:182.00px;width:13.50px;height:13.50px;background:#c6d6f2;border:0.8px solid #8ca8e0;"></div>
<svg style="left:251.00px;top:184.00px;" width="4.5" height="9.5" viewBox="0 0 4.5 9.5"><path d="M2.4 0.5 V9" stroke="#4a90b0" stroke-width="1.2"/><path d="M0.8 1.2 H2.4 M2.4 4.5 H3.8" stroke="#4a90b0" stroke-width="1"/></svg>
<svg style="left:248.30px;top:198.00px;" width="9" height="8.5" viewBox="0 0 9 8.5"><path d="M0.8 0.5 V8" stroke="#444" stroke-width="0.8"/><path d="M0.8 1 H8.5" stroke="#777" stroke-width="0.7"/><path d="M1.2 6.5 L4 4.2 L6 4.5 L8.5 2.3" stroke="#e01a1a" stroke-width="1.1" fill="none"/><path d="M4.5 3 L7.5 2" stroke="#3a80e0" stroke-width="1"/></svg>
<svg style="left:248.00px;top:211.50px;" width="9.5" height="8.8" viewBox="0 0 9.5 8.8"><path d="M1 1 L8.5 8 M3 0.5 L9 6 M0.5 5 L5 8.5 M8.5 0.8 L1 8" stroke="#888" stroke-width="0.7"/><path d="M0.5 4.5 L9 6.5" stroke="#e01a1a" stroke-width="1.2"/></svg>
<svg style="left:249.50px;top:224.00px;" width="7" height="10" viewBox="0 0 7 10"><path d="M3.5 0.5 V4" stroke="#7a6ae0" stroke-width="1.4"/><circle cx="3.5" cy="2.8" r="1.4" fill="#8a7af0"/><ellipse cx="2" cy="7" rx="1.8" ry="2.2" fill="#f08a2a"/><ellipse cx="5" cy="7" rx="1.8" ry="2.2" fill="#f08a2a"/><circle cx="3.5" cy="6.8" r="0.9" fill="#5a4ab0"/></svg>
</body></html>
